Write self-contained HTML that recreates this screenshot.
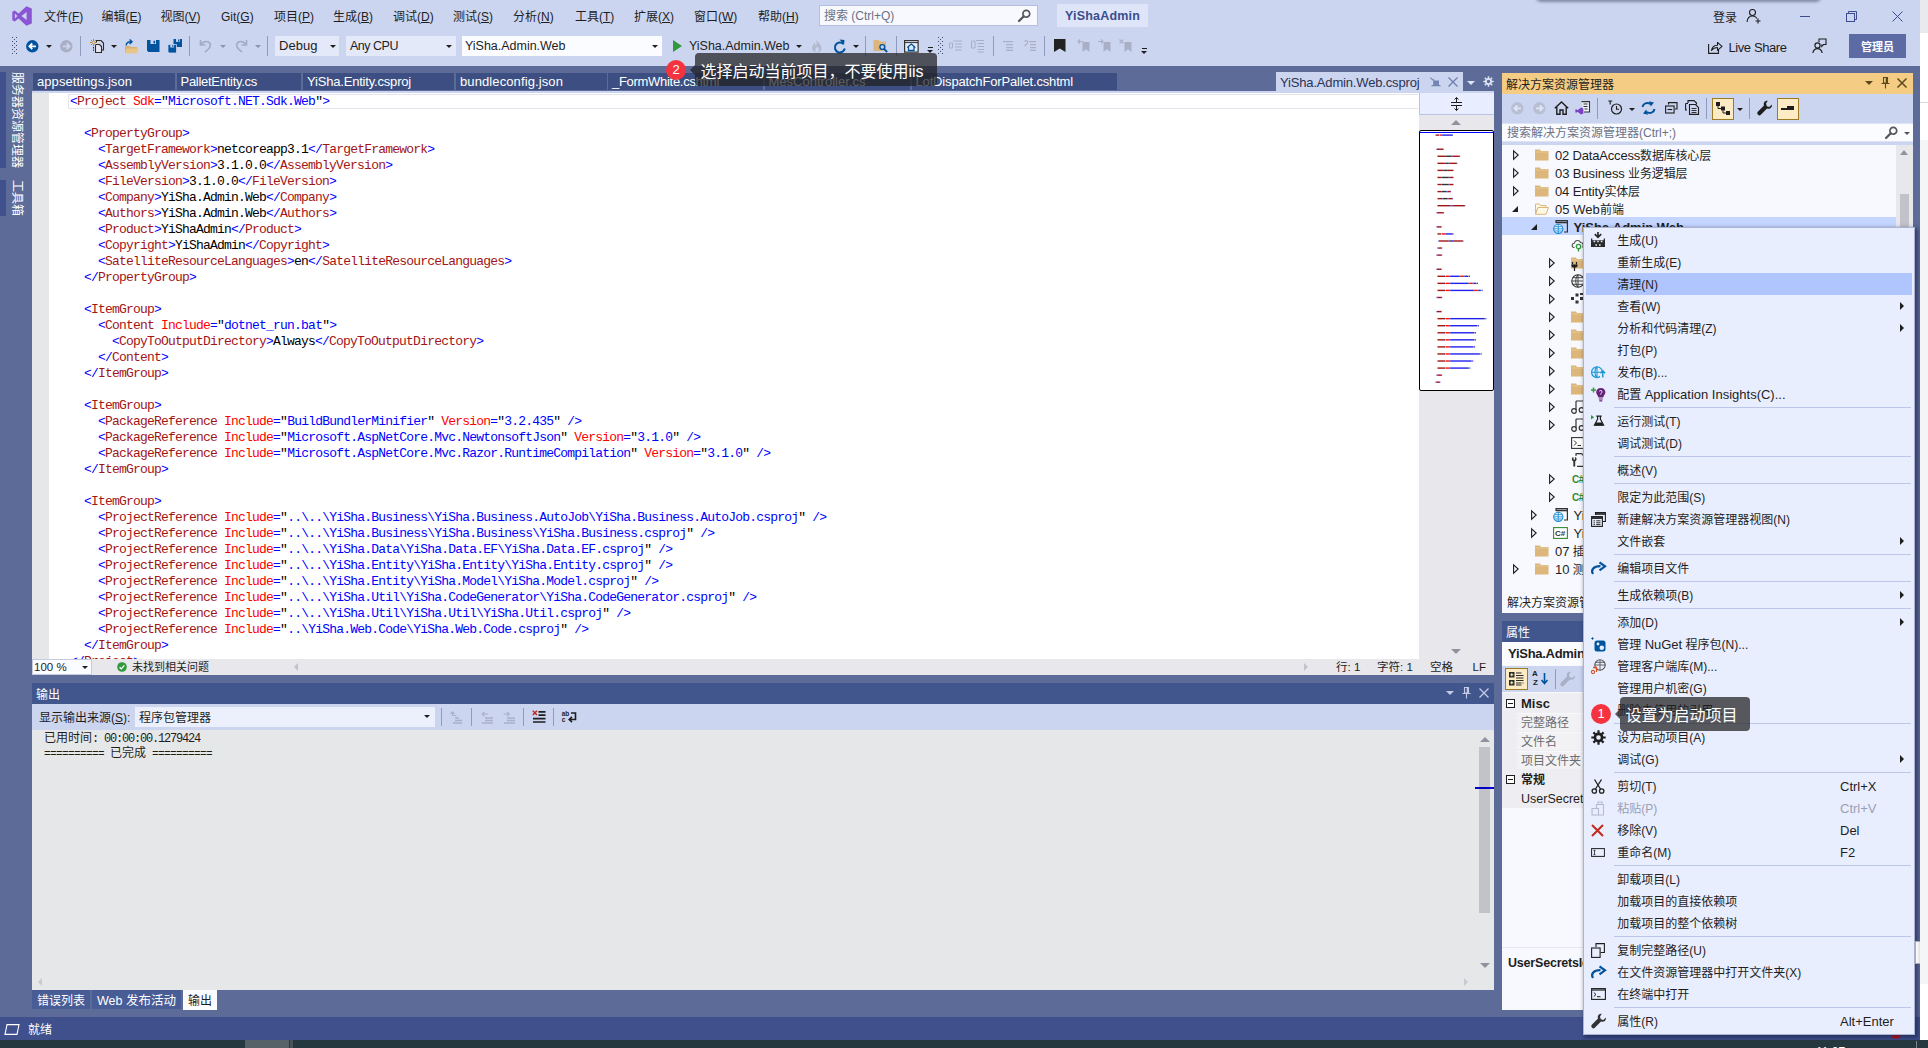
<!DOCTYPE html>
<html lang="zh-CN"><head><meta charset="utf-8"><title>YiShaAdmin - Microsoft Visual Studio</title>
<style>
*{box-sizing:border-box;margin:0;padding:0}
html,body{width:1928px;height:1048px;overflow:hidden;background:#fff}
body{position:relative;font-family:"Liberation Sans","Noto Sans CJK SC",sans-serif;font-size:12px;color:#1e1e1e;line-height:1}
.a{position:absolute}
.t{position:absolute;white-space:nowrap;line-height:16px;height:16px;margin-top:1px}
.l{font-size:13px}
#vs{position:absolute;left:0;top:0;width:1920px;height:1040px;background:#5d6b99;overflow:hidden}
#cmd{position:absolute;left:0;top:0;width:1920px;height:66px;background:#ccd5f0}
.mi{position:absolute;top:8.5px;line-height:16px;white-space:nowrap;font-size:12px}
.mi u{text-decoration:underline;text-underline-offset:1px}
.sep{position:absolute;width:1px;background:#8e9bbc}
.combo{position:absolute;top:36px;height:20px;background:#e4e9f9;line-height:20px;padding-left:4px;white-space:nowrap;font-size:12px}
.dd{position:absolute;width:0;height:0;border-left:3px solid transparent;border-right:3px solid transparent;border-top:3px solid #1e1e1e}
.tab{position:absolute;top:73px;height:17px;background:#3d4f82;color:#fff;line-height:17px;padding-left:4px;white-space:nowrap;font-size:12px;overflow:hidden}
.code{position:absolute;left:70px;white-space:pre;font-family:"Liberation Mono","Noto Sans CJK SC",monospace;font-size:13px;letter-spacing:-0.8px;line-height:16px;height:16px;color:#000}
.b{color:#00f}.r{color:#a31515}.at{color:#f00}
.row{position:absolute;left:1502px;width:394px;height:18px}
.row .tx{position:absolute;top:1px;line-height:16px;white-space:nowrap}
.exp{position:absolute;width:0;height:0}
.m{position:absolute;left:1617.3px;line-height:16px;height:16px;margin-top:1px;white-space:nowrap;font-size:12px;color:#1e1e1e}
.sc{position:absolute;left:1840px;line-height:16px;height:16px;margin-top:1px;white-space:nowrap;font-size:12px;color:#1e1e1e}
.msep{position:absolute;left:1614px;width:297px;height:1px;background:#bcc7e8}
.marr{position:absolute;left:1900px;width:0;height:0;border-top:4px solid transparent;border-bottom:4px solid transparent;border-left:4px solid #1e1e1e}
.tip{position:absolute;background:rgba(30,30,32,.72);border-radius:4px;color:#fff;font-size:16px;white-space:nowrap}
.badge{position:absolute;width:20px;height:20px;border-radius:10px;background:#f5333f;color:#fff;font-size:13px;line-height:20px;text-align:center}
svg{position:absolute;overflow:visible}
</style></head>
<body>
<div class="a" style="left:1920px;top:0;width:8px;height:33px;background:#e8eaed"></div>
<div class="a" style="left:1920px;top:102px;width:8px;height:1px;background:#d8d8d8"></div>
<div class="a" style="left:1920px;top:140px;width:8px;height:844px;background:#f4f5f7"></div>
<div class="a" style="left:0;top:1040px;width:1928px;height:8px;background:#25373f"></div>
<div class="a" style="left:245px;top:1040px;width:44px;height:8px;background:#566268"></div><div class="a" style="left:290px;top:1040px;width:3px;height:8px;background:#48545a"></div>
<div class="a" style="left:1915.5px;top:1041px;width:1px;height:7px;background:#7a868c"></div>
<div class="a" style="left:1816px;top:1045.5px;width:30px;height:3px;overflow:hidden;color:#fff;font-size:12px;line-height:12px;white-space:nowrap">11:07</div>
<div id="vs">
<div id="cmd">
<svg style="left:12px;top:6px" width="20" height="20" viewBox="0 0 20 20"><path d="M14.4 0.2 L19.8 2.4 V17.6 L14.4 19.8 L6.6 12.4 L2.7 15.4 L0.3 14.2 V5.8 L2.7 4.6 L6.6 7.6 Z M14.6 5.9 L9.5 10 L14.6 14.1 Z M2.9 7.5 V12.5 L5.4 10 Z" fill="#8a56d3" fill-rule="evenodd"/></svg>
<div class="mi" style="left:44px">文件(<u>F</u>)</div>
<div class="mi" style="left:101.5px">编辑(<u>E</u>)</div>
<div class="mi" style="left:160.5px">视图(<u>V</u>)</div>
<div class="mi" style="left:221px">Git(<u>G</u>)</div>
<div class="mi" style="left:274px">项目(<u>P</u>)</div>
<div class="mi" style="left:333px">生成(<u>B</u>)</div>
<div class="mi" style="left:393px">调试(<u>D</u>)</div>
<div class="mi" style="left:453px">测试(<u>S</u>)</div>
<div class="mi" style="left:513px">分析(<u>N</u>)</div>
<div class="mi" style="left:575px">工具(<u>T</u>)</div>
<div class="mi" style="left:634px">扩展(<u>X</u>)</div>
<div class="mi" style="left:694px">窗口(<u>W</u>)</div>
<div class="mi" style="left:758px">帮助(<u>H</u>)</div>
<div class="a" style="left:819px;top:5px;width:219px;height:21px;background:#f7f9fe;border:1px solid #b4bfe0"></div><div class="t" style="left:824px;top:7px;color:#6b7185">搜索 (Ctrl+Q)</div>
<svg style="left:1018px;top:9px" width="13" height="13" viewBox="0 0 13 13"><circle cx="8.3" cy="4.7" r="3.4" fill="none" stroke="#555" stroke-width="1.7"/><path d="M5.8 7.2 L1 12" stroke="#555" stroke-width="2.2" stroke-linecap="round"/></svg>
<div class="a" style="left:1057px;top:4px;width:91px;height:23px;background:#dfe5f8"></div><div class="t" style="left:1065px;top:7px;color:#3b4d8e;font-size:12.5px;letter-spacing:0.183px;font-weight:bold;">YiShaAdmin</div>
<div class="t" style="left:1713px;top:9px">登录</div>
<svg style="left:1746px;top:8px" width="16" height="16" viewBox="0 0 16 16"><circle cx="6.5" cy="4.5" r="3" fill="none" stroke="#1e1e1e" stroke-width="1.1"/><path d="M1 14 C1.5 9.5 4 8 6.5 8 C8.5 8 10 8.8 11 10.5" fill="none" stroke="#1e1e1e" stroke-width="1.1"/><path d="M12 10.5 V15.5 M9.5 13 H14.5" stroke="#1e1e1e" stroke-width="1.1"/></svg>
<div class="a" style="left:1800px;top:16px;width:10px;height:1px;background:#3b4d8e"></div><svg style="left:1846px;top:11px" width="11" height="11" viewBox="0 0 11 11"><rect x="0.5" y="2.5" width="8" height="8" fill="none" stroke="#3b4d8e"/><path d="M2.5 2.5 V0.5 H10.5 V8.5 H8.5" fill="none" stroke="#3b4d8e"/></svg><svg style="left:1892px;top:11px" width="11" height="11" viewBox="0 0 11 11"><path d="M0.5 0.5 L10.5 10.5 M10.5 0.5 L0.5 10.5" stroke="#3b4d8e" stroke-width="1"/></svg>
<div class="a" style="left:1538px;top:-7px;width:281px;height:7px;background:#778;border-radius:3px;box-shadow:0 0 3px 2px rgba(70,75,100,.55)"></div>
</div>
<svg style="left:12px;top:37px" width="5" height="18" viewBox="0 0 5 18" shape-rendering="crispEdges"><rect x="0" y="0" width="1" height="1" fill="#3f4a6e"/><rect x="4" y="0" width="1" height="1" fill="#3f4a6e"/><rect x="2" y="2" width="1" height="1" fill="#3f4a6e"/><rect x="0" y="4" width="1" height="1" fill="#3f4a6e"/><rect x="4" y="4" width="1" height="1" fill="#3f4a6e"/><rect x="2" y="6" width="1" height="1" fill="#3f4a6e"/><rect x="0" y="8" width="1" height="1" fill="#3f4a6e"/><rect x="4" y="8" width="1" height="1" fill="#3f4a6e"/><rect x="2" y="10" width="1" height="1" fill="#3f4a6e"/><rect x="0" y="12" width="1" height="1" fill="#3f4a6e"/><rect x="4" y="12" width="1" height="1" fill="#3f4a6e"/><rect x="2" y="14" width="1" height="1" fill="#3f4a6e"/><rect x="0" y="16" width="1" height="1" fill="#3f4a6e"/><rect x="4" y="16" width="1" height="1" fill="#3f4a6e"/></svg><svg style="left:26px;top:39.5px" width="13" height="13" viewBox="0 0 13 13"><circle cx="6.3" cy="6.3" r="6.2" fill="#00539c"/><path d="M10 6.3 H4 M6.3 3.5 L3.4 6.3 L6.3 9.1" fill="none" stroke="#fff" stroke-width="1.8"/></svg><div class="dd" style="left:46px;top:45px;border-top-color:#1e1e1e"></div><svg style="left:59.5px;top:39.5px" width="13" height="13" viewBox="0 0 13 13"><circle cx="6.3" cy="6.3" r="6.2" fill="#a9afc4"/><path d="M3 6.3 H9 M6.7 3.5 L9.6 6.3 L6.7 9.1" fill="none" stroke="#ccd5f0" stroke-width="1.8"/></svg><div class="sep" style="left:80px;top:36px;height:20px"></div><svg style="left:90px;top:39px" width="14" height="14" viewBox="0 0 14 14"><path d="M6.5 3 V1.5 H11 L13.5 4 V11 H12" fill="none" stroke="#2b2b2b" stroke-width="1.1"/><path d="M5.5 5.5 H9.5 L11.5 7.5 V13.5 H5.5 Z" fill="#e6e6f2" stroke="#2b2b2b" stroke-width="1.1"/><path d="M3.5 8 V11.5 H4.5" fill="none" stroke="#2b2b2b" stroke-width="1" stroke-dasharray="1.5 1"/><path d="M3.5 0 V7 M0 3.5 H7 M1 1 L6 6 M6 1 L1 6" stroke="#c27d1a" stroke-width="0.9"/><circle cx="3.5" cy="3.5" r="1.2" fill="#ccd5f0"/></svg><div class="dd" style="left:111px;top:45px;border-top-color:#1e1e1e"></div><svg style="left:123.5px;top:38.5px" width="15" height="15" viewBox="0 0 15 15"><path d="M1 7 H6 L7 8 H13 V14 H1 Z" fill="#d9b172"/><path d="M2.8 9.6 H14.8 L13 14.6 H0.8 Z" fill="#e8c68a"/><path d="M2.3 6.5 C2 3.8 4 2.6 7.6 2.8 M5.6 0.6 L8 2.8 L5.6 5" fill="none" stroke="#00539c" stroke-width="1.4"/></svg><svg style="left:147px;top:40px" width="13" height="12" viewBox="0 0 13 12"><path d="M0 0 H12.5 V12 H1.5 L0 10.5 Z" fill="#00539c"/><rect x="3.5" y="0" width="5.5" height="4" fill="#ccd5f0"/><rect x="6.5" y="0.8" width="1.6" height="2.6" fill="#00539c"/></svg><svg style="left:168px;top:39px" width="15" height="14" viewBox="0 0 15 14"><path d="M5.5 0 H14 V8 H6.5 L5.5 7 Z" fill="#00539c"/><rect x="8" y="0" width="3.8" height="2.8" fill="#ccd5f0"/><rect x="10" y="0.5" width="1.1" height="1.8" fill="#00539c"/><path d="M0 5.5 H8.5 V14 H1 L0 13 Z" fill="#00539c" stroke="#ccd5f0" stroke-width="0.8"/><rect x="2.3" y="5.7" width="3.8" height="2.8" fill="#ccd5f0"/><rect x="4.3" y="6.2" width="1.1" height="1.8" fill="#00539c"/></svg><div class="sep" style="left:189px;top:36px;height:20px"></div><svg style="left:199px;top:39px" width="14" height="14" viewBox="0 0 14 14"><path d="M1.5 1 V6 H6.5 M2 5.5 C4 2 9 1.5 11 4.5 C12.5 7.5 9.5 10.5 6 13" fill="none" stroke="#a4abc2" stroke-width="1.7"/></svg><div class="dd" style="left:220px;top:45px;border-top-color:#8d94ad"></div><svg style="left:233.5px;top:39px" width="14" height="14" viewBox="0 0 14 14"><path d="M12.5 1 V6 H7.5 M12 5.5 C10 2 5 1.5 3 4.5 C1.5 7.5 4.5 10.5 8 13" fill="none" stroke="#a4abc2" stroke-width="1.7"/></svg><div class="dd" style="left:255px;top:45px;border-top-color:#8d94ad"></div><div class="sep" style="left:267px;top:36px;height:20px"></div><div class="combo" style="left:275px;width:64px;font-size:13px;letter-spacing:0.037px;">Debug</div><div class="dd" style="left:330px;top:45px;border-top-color:#1e1e1e"></div><div class="combo" style="left:346px;width:110px;font-size:12.5px;letter-spacing:-0.487px;">Any CPU</div><div class="dd" style="left:446px;top:45px;border-top-color:#1e1e1e"></div><div class="combo" style="left:462px;width:200px;background:#fbfcff;padding-left:3px;font-size:12.5px;letter-spacing:-0.017px;">YiSha.Admin.Web</div><div class="dd" style="left:652px;top:45px;border-top-color:#1e1e1e"></div><svg style="left:672.5px;top:40px" width="9" height="12" viewBox="0 0 9 12"><path d="M0 0 L9 6 L0 12 Z" fill="#2f9a3a"/></svg><div class="t" style="left:689px;top:36.5px;font-size:12.5px;letter-spacing:-0.017px;">YiSha.Admin.Web</div><div class="dd" style="left:796px;top:45px;border-top-color:#1e1e1e"></div><svg style="left:811px;top:39px" width="12" height="14" viewBox="0 0 12 14"><path d="M5 0.5 C7 3 10.5 5.5 10.5 9.5 C10.5 12 8.5 13.5 6 13.5 C3 13.5 1 11.5 1 9 C1 6.5 3 5.5 3.3 3.5 C4.5 4.5 4.8 6 4.6 7.2 C6 6 5.8 2.5 5 0.5 Z" fill="#b4bad0"/><path d="M6 13 C4.5 13 3.8 11.8 4.3 10.5 C4.8 9.5 5.8 9 6 7.5 C7.5 9 8.3 10.3 7.8 11.8 C7.5 12.6 6.8 13 6 13 Z" fill="#ccd5f0"/></svg><svg style="left:833px;top:38.5px" width="14" height="15" viewBox="0 0 14 15"><path d="M10.5 5 A5 5 0 1 0 11.8 9.5" fill="none" stroke="#00539c" stroke-width="2"/><path d="M6.5 0.5 L11.5 1 L11 6 Z" fill="#00539c"/></svg><div class="dd" style="left:853px;top:45px;border-top-color:#1e1e1e"></div><div class="sep" style="left:865px;top:36px;height:20px"></div><svg style="left:873px;top:39px" width="16" height="14" viewBox="0 0 16 14"><path d="M0.5 1 H5.5 L6.8 2.5 H13 V12 H0.5 Z" fill="#dcb67a"/><circle cx="9.3" cy="8" r="2.4" fill="#ccd5f0" stroke="#00539c" stroke-width="1.4"/><path d="M11 9.8 L14.2 13" stroke="#00539c" stroke-width="1.8"/></svg><div class="sep" style="left:896px;top:36px;height:20px"></div><svg style="left:904px;top:39.5px" width="15" height="13" viewBox="0 0 15 13"><rect x="0.6" y="0.6" width="13.5" height="11.5" fill="#e6ebfa" stroke="#333" stroke-width="1.2"/><path d="M1 2.6 H14" stroke="#333" stroke-width="1"/><path d="M3.3 7.5 L7.3 4 L11.3 7.5 M4.5 7 V10.5 H10 V7" fill="none" stroke="#00539c" stroke-width="1.3"/></svg><div class="a" style="left:927.5px;top:47px;width:5px;height:1px;background:#1e1e1e"></div><div class="dd" style="left:927px;top:50px;border-top-color:#1e1e1e"></div><svg style="left:938px;top:37px" width="5" height="18" viewBox="0 0 5 18" shape-rendering="crispEdges"><rect x="0" y="0" width="1" height="1" fill="#3f4a6e"/><rect x="4" y="0" width="1" height="1" fill="#3f4a6e"/><rect x="2" y="2" width="1" height="1" fill="#3f4a6e"/><rect x="0" y="4" width="1" height="1" fill="#3f4a6e"/><rect x="4" y="4" width="1" height="1" fill="#3f4a6e"/><rect x="2" y="6" width="1" height="1" fill="#3f4a6e"/><rect x="0" y="8" width="1" height="1" fill="#3f4a6e"/><rect x="4" y="8" width="1" height="1" fill="#3f4a6e"/><rect x="2" y="10" width="1" height="1" fill="#3f4a6e"/><rect x="0" y="12" width="1" height="1" fill="#3f4a6e"/><rect x="4" y="12" width="1" height="1" fill="#3f4a6e"/><rect x="2" y="14" width="1" height="1" fill="#3f4a6e"/><rect x="0" y="16" width="1" height="1" fill="#3f4a6e"/><rect x="4" y="16" width="1" height="1" fill="#3f4a6e"/></svg><svg style="left:949px;top:40px" width="14" height="12" viewBox="0 0 14 12"><path d="M4 1 H13 M6 4 H13 M6 7 H13 M6 10 H13" stroke="#a9b0c6" stroke-width="1.2"/><path d="M0.5 3 H3.5 V8 H0.5 Z" fill="none" stroke="#a9b0c6"/></svg><svg style="left:971px;top:39px" width="14" height="14" viewBox="0 0 14 14"><path d="M0.5 2 H4 V9 H0.5 Z" fill="none" stroke="#a9b0c6"/><path d="M5 1.5 H13 M6.5 4.5 H13 M6.5 7.5 H13 M6.5 10.5 H13 M6.5 13 H13" stroke="#a9b0c6" stroke-width="1.2"/></svg><div class="sep" style="left:993px;top:36px;height:20px"></div><svg style="left:1003px;top:41px" width="11" height="10" viewBox="0 0 11 10"><path d="M0 0.6 H10 M3 3.6 H10 M3 6.6 H10 M3 9.4 H10" stroke="#a9b0c6" stroke-width="1.1"/></svg><svg style="left:1024px;top:40px" width="13" height="11" viewBox="0 0 13 11"><path d="M5 1.6 H12 M6 4.6 H12 M6 7.6 H12 M6 10.4 H12" stroke="#a9b0c6" stroke-width="1.1"/><path d="M0.5 1.5 C1.5 0 4 0.5 3.6 2.5 C3.3 3.8 1.5 4.5 0.8 6" fill="none" stroke="#a9b0c6" stroke-width="1.1"/></svg><div class="sep" style="left:1044px;top:36px;height:20px"></div><svg style="left:1053.5px;top:39px" width="12" height="13" viewBox="0 0 12 13"><path d="M0 0 H11.5 V13 L5.75 9.5 L0 13 Z" fill="#222"/></svg><svg style="left:1077px;top:39px" width="13" height="13" viewBox="0 0 13 13"><path d="M5.5 3 H12.5 V13 L9 10.3 L5.5 13 Z" fill="#a9b0c6"/><path d="M6 2.5 H1 M3 0.5 L1 2.5 L3 4.5" fill="none" stroke="#a9b0c6" stroke-width="1.1"/></svg><svg style="left:1098px;top:39px" width="13" height="13" viewBox="0 0 13 13"><path d="M5.5 3 H12.5 V13 L9 10.3 L5.5 13 Z" fill="#a9b0c6"/><path d="M0 2.5 H5 M3 0.5 L5 2.5 L3 4.5" fill="none" stroke="#a9b0c6" stroke-width="1.1"/></svg><svg style="left:1119px;top:39px" width="13" height="13" viewBox="0 0 13 13"><path d="M5.5 3 H12.5 V13 L9 10.3 L5.5 13 Z" fill="#a9b0c6"/><path d="M0.5 0.5 L4.5 4.5 M4.5 0.5 L0.5 4.5" fill="none" stroke="#a9b0c6" stroke-width="1.1"/></svg><div class="a" style="left:1141.5px;top:48px;width:5px;height:1px;background:#1e1e1e"></div><div class="dd" style="left:1141px;top:51px;border-top-color:#1e1e1e"></div><svg style="left:1708px;top:40px" width="15" height="14" viewBox="0 0 15 14"><path d="M0.6 4 V13.4 H10.5 V10" fill="none" stroke="#1e1e1e" stroke-width="1.1"/><path d="M3.5 10.5 C4 7 6.5 5.3 9.5 5.3 V2.3 L14 6.3 L9.5 10.3 V7.5 C7 7.5 5 8.3 3.5 10.5 Z" fill="none" stroke="#1e1e1e" stroke-width="1.1" stroke-linejoin="round"/></svg><div class="t" style="left:1728.5px;top:38.5px;font-size:13px;letter-spacing:-0.416px;">Live Share</div><svg style="left:1812px;top:38px" width="15" height="16" viewBox="0 0 15 16"><circle cx="5.5" cy="7.5" r="2.6" fill="none" stroke="#1e1e1e" stroke-width="1.2"/><path d="M0.8 15 C1.5 11.5 3.5 10.6 5.5 10.6 C7.5 10.6 9.5 11.5 10.2 15" fill="none" stroke="#1e1e1e" stroke-width="1.2"/><path d="M7 4 V1 H14 V6.5 H11.5 L9.8 8.3 V6.5" fill="none" stroke="#1e1e1e" stroke-width="1.1"/></svg><div class="a" style="left:1849px;top:34px;width:57px;height:24px;background:#5c6ba4"></div><div class="t" style="left:1861px;top:38px;color:#fff;font-weight:bold;font-size:11px">管理员</div>
<div class="a" style="left:0;top:72px;width:6px;height:96px;background:#40508d"></div><div class="a" style="left:0;top:180px;width:6px;height:36px;background:#40508d"></div><div class="a" style="left:9px;top:72px;width:16px;height:96px;writing-mode:vertical-rl;text-orientation:sideways;color:#fff;font-size:12px;line-height:16px;white-space:nowrap">服务器资源管理器</div><div class="a" style="left:9px;top:180px;width:16px;height:36px;writing-mode:vertical-rl;text-orientation:sideways;color:#fff;font-size:12px;line-height:16px;white-space:nowrap">工具箱</div>
<div class="tab" style="left:33px;width:141.5px;font-size:13px;letter-spacing:0.065px;">appsettings.json</div><div class="tab" style="left:176.5px;width:124px;font-size:13px;letter-spacing:-0.279px;">PalletEntity.cs</div><div class="tab" style="left:303px;width:150.5px;font-size:13px;letter-spacing:-0.192px;">YiSha.Entity.csproj</div><div class="tab" style="left:456px;width:150.5px;font-size:13px;letter-spacing:0.106px;">bundleconfig.json</div><div class="tab" style="left:608px;width:154.5px;font-size:13px;letter-spacing:-0.292px;">_FormWhite.cshtml</div><div class="tab" style="left:764.5px;width:145px;font-size:13px;letter-spacing:0.012px;">MesController.cs</div><div class="tab" style="left:911.5px;width:205.5px;font-size:13px;letter-spacing:-0.161px;">LotDispatchForPallet.cshtml</div><div class="a" style="left:1276px;top:72px;width:187px;height:20.5px;background:#ccd5f0"></div><div class="t" style="left:1280px;top:74px;color:#2a3354;font-size:13px;letter-spacing:-0.163px;">YiSha.Admin.Web.csproj</div><svg style="left:1430px;top:77px" width="11" height="10" viewBox="0 0 11 10"><path d="M0.3 0.6 L3.2 3.3" stroke="#7484b3" stroke-width="1.1"/><path d="M3.5 1 L4.6 3.6 H9 V8 H10.5 V9.2 H1.5 V8 H3.2 V4.8 Z" fill="#7484b3"/></svg><svg style="left:1448px;top:76.5px" width="10" height="10" viewBox="0 0 10 10"><path d="M0.5 0.5 L9.5 9.5 M9.5 0.5 L0.5 9.5" stroke="#6b7cab" stroke-width="1.2"/></svg><div class="dd" style="left:1466.5px;top:81px;border-left-width:4px;border-right-width:4px;border-top:4px solid #dfe5f8"></div><svg style="left:1482.5px;top:75.5px" width="11" height="11" viewBox="0 0 11 11"><circle cx="5.5" cy="5.5" r="2.6" fill="none" stroke="#dfe5f8" stroke-width="1.8"/><path d="M5.5 0.3 V2 M5.5 9 V10.7 M0.3 5.5 H2 M9 5.5 H10.7 M1.8 1.8 L3 3 M8 8 L9.2 9.2 M9.2 1.8 L8 3 M3 8 L1.8 9.2" stroke="#dfe5f8" stroke-width="1.5"/></svg>
<div class="a" style="left:32px;top:90.5px;width:1462px;height:3px;background:#ccd5f0"></div><div class="a" id="ed" style="left:32px;top:93px;width:1387px;height:566px;background:#fff;overflow:hidden"></div><div class="a" style="left:32px;top:93px;width:17px;height:566px;background:#e6e7e8"></div><div class="a" style="left:68px;top:93.5px;width:1350px;height:15.5px;border:1px solid #e4e4ec;border-right:0"></div>
<div class="code" style="top:94px"><span class="b">&lt;</span><span class="r">Project</span> <span class="at">Sdk</span><span class="b">=</span>"<span class="b">Microsoft.NET.Sdk.Web</span>"<span class="b">&gt;</span></div>
<div class="code" style="top:126px">  <span class="b">&lt;</span><span class="r">PropertyGroup</span><span class="b">&gt;</span></div>
<div class="code" style="top:142px">    <span class="b">&lt;</span><span class="r">TargetFramework</span><span class="b">&gt;</span>netcoreapp3.1<span class="b">&lt;/</span><span class="r">TargetFramework</span><span class="b">&gt;</span></div>
<div class="code" style="top:158px">    <span class="b">&lt;</span><span class="r">AssemblyVersion</span><span class="b">&gt;</span>3.1.0.0<span class="b">&lt;/</span><span class="r">AssemblyVersion</span><span class="b">&gt;</span></div>
<div class="code" style="top:174px">    <span class="b">&lt;</span><span class="r">FileVersion</span><span class="b">&gt;</span>3.1.0.0<span class="b">&lt;/</span><span class="r">FileVersion</span><span class="b">&gt;</span></div>
<div class="code" style="top:190px">    <span class="b">&lt;</span><span class="r">Company</span><span class="b">&gt;</span>YiSha.Admin.Web<span class="b">&lt;/</span><span class="r">Company</span><span class="b">&gt;</span></div>
<div class="code" style="top:206px">    <span class="b">&lt;</span><span class="r">Authors</span><span class="b">&gt;</span>YiSha.Admin.Web<span class="b">&lt;/</span><span class="r">Authors</span><span class="b">&gt;</span></div>
<div class="code" style="top:222px">    <span class="b">&lt;</span><span class="r">Product</span><span class="b">&gt;</span>YiShaAdmin<span class="b">&lt;/</span><span class="r">Product</span><span class="b">&gt;</span></div>
<div class="code" style="top:238px">    <span class="b">&lt;</span><span class="r">Copyright</span><span class="b">&gt;</span>YiShaAdmin<span class="b">&lt;/</span><span class="r">Copyright</span><span class="b">&gt;</span></div>
<div class="code" style="top:254px">    <span class="b">&lt;</span><span class="r">SatelliteResourceLanguages</span><span class="b">&gt;</span>en<span class="b">&lt;/</span><span class="r">SatelliteResourceLanguages</span><span class="b">&gt;</span></div>
<div class="code" style="top:270px">  <span class="b">&lt;/</span><span class="r">PropertyGroup</span><span class="b">&gt;</span></div>
<div class="code" style="top:302px">  <span class="b">&lt;</span><span class="r">ItemGroup</span><span class="b">&gt;</span></div>
<div class="code" style="top:318px">    <span class="b">&lt;</span><span class="r">Content</span> <span class="at">Include</span><span class="b">=</span>"<span class="b">dotnet_run.bat</span>"<span class="b">&gt;</span></div>
<div class="code" style="top:334px">      <span class="b">&lt;</span><span class="r">CopyToOutputDirectory</span><span class="b">&gt;</span>Always<span class="b">&lt;/</span><span class="r">CopyToOutputDirectory</span><span class="b">&gt;</span></div>
<div class="code" style="top:350px">    <span class="b">&lt;/</span><span class="r">Content</span><span class="b">&gt;</span></div>
<div class="code" style="top:366px">  <span class="b">&lt;/</span><span class="r">ItemGroup</span><span class="b">&gt;</span></div>
<div class="code" style="top:398px">  <span class="b">&lt;</span><span class="r">ItemGroup</span><span class="b">&gt;</span></div>
<div class="code" style="top:414px">    <span class="b">&lt;</span><span class="r">PackageReference</span> <span class="at">Include</span><span class="b">=</span>"<span class="b">BuildBundlerMinifier</span>" <span class="at">Version</span><span class="b">=</span>"<span class="b">3.2.435</span>"<span class="b"> /&gt;</span></div>
<div class="code" style="top:430px">    <span class="b">&lt;</span><span class="r">PackageReference</span> <span class="at">Include</span><span class="b">=</span>"<span class="b">Microsoft.AspNetCore.Mvc.NewtonsoftJson</span>" <span class="at">Version</span><span class="b">=</span>"<span class="b">3.1.0</span>"<span class="b"> /&gt;</span></div>
<div class="code" style="top:446px">    <span class="b">&lt;</span><span class="r">PackageReference</span> <span class="at">Include</span><span class="b">=</span>"<span class="b">Microsoft.AspNetCore.Mvc.Razor.RuntimeCompilation</span>" <span class="at">Version</span><span class="b">=</span>"<span class="b">3.1.0</span>"<span class="b"> /&gt;</span></div>
<div class="code" style="top:462px">  <span class="b">&lt;/</span><span class="r">ItemGroup</span><span class="b">&gt;</span></div>
<div class="code" style="top:494px">  <span class="b">&lt;</span><span class="r">ItemGroup</span><span class="b">&gt;</span></div>
<div class="code" style="top:510px">    <span class="b">&lt;</span><span class="r">ProjectReference</span> <span class="at">Include</span><span class="b">=</span>"<span class="b">..\..\YiSha.Business\YiSha.Business.AutoJob\YiSha.Business.AutoJob.csproj</span>"<span class="b"> /&gt;</span></div>
<div class="code" style="top:526px">    <span class="b">&lt;</span><span class="r">ProjectReference</span> <span class="at">Include</span><span class="b">=</span>"<span class="b">..\..\YiSha.Business\YiSha.Business\YiSha.Business.csproj</span>"<span class="b"> /&gt;</span></div>
<div class="code" style="top:542px">    <span class="b">&lt;</span><span class="r">ProjectReference</span> <span class="at">Include</span><span class="b">=</span>"<span class="b">..\..\YiSha.Data\YiSha.Data.EF\YiSha.Data.EF.csproj</span>"<span class="b"> /&gt;</span></div>
<div class="code" style="top:558px">    <span class="b">&lt;</span><span class="r">ProjectReference</span> <span class="at">Include</span><span class="b">=</span>"<span class="b">..\..\YiSha.Entity\YiSha.Entity\YiSha.Entity.csproj</span>"<span class="b"> /&gt;</span></div>
<div class="code" style="top:574px">    <span class="b">&lt;</span><span class="r">ProjectReference</span> <span class="at">Include</span><span class="b">=</span>"<span class="b">..\..\YiSha.Entity\YiSha.Model\YiSha.Model.csproj</span>"<span class="b"> /&gt;</span></div>
<div class="code" style="top:590px">    <span class="b">&lt;</span><span class="r">ProjectReference</span> <span class="at">Include</span><span class="b">=</span>"<span class="b">..\..\YiSha.Util\YiSha.CodeGenerator\YiSha.CodeGenerator.csproj</span>"<span class="b"> /&gt;</span></div>
<div class="code" style="top:606px">    <span class="b">&lt;</span><span class="r">ProjectReference</span> <span class="at">Include</span><span class="b">=</span>"<span class="b">..\..\YiSha.Util\YiSha.Util\YiSha.Util.csproj</span>"<span class="b"> /&gt;</span></div>
<div class="code" style="top:622px">    <span class="b">&lt;</span><span class="r">ProjectReference</span> <span class="at">Include</span><span class="b">=</span>"<span class="b">..\YiSha.Web.Code\YiSha.Web.Code.csproj</span>"<span class="b"> /&gt;</span></div>
<div class="code" style="top:638px">  <span class="b">&lt;/</span><span class="r">ItemGroup</span><span class="b">&gt;</span></div>
<div class="code" style="top:654px;height:5px;overflow:hidden"><span class="b">&lt;/</span><span class="r">Project</span><span class="b">&gt;</span></div>
<div class="a" style="left:1419px;top:93px;width:75px;height:566px;background:#e8e8ec"></div><div class="a" style="left:1419px;top:93px;width:75px;height:22px;background:#e8edff;border-left:1px solid #b9c3e6;border-bottom:1px solid #b9c3e6"></div><svg style="left:1450px;top:97px" width="13" height="14" viewBox="0 0 13 14"><path d="M1 5.5 H12 M1 8.5 H12 M6.5 0.5 V5.5 M6.5 8.5 V13.5 M4.5 2.5 L6.5 0.5 L8.5 2.5 M4.5 11.5 L6.5 13.5 L8.5 11.5" fill="none" stroke="#1e1e1e" stroke-width="1"/></svg><div class="a" style="left:1451px;top:120px;width:0;height:0;border-left:5px solid transparent;border-right:5px solid transparent;border-bottom:5px solid #8f939e"></div><div class="a" style="left:1451px;top:649px;width:0;height:0;border-left:5px solid transparent;border-right:5px solid transparent;border-top:5px solid #8f939e"></div><div class="a" style="left:1419px;top:129.5px;width:75px;height:261px;background:#fff;border:1px solid #000;border-radius:2px"></div><div class="a" style="left:1420px;top:131.5px;width:73px;height:1.5px;background:#00f"></div><svg style="left:1419px;top:93px" width="75" height="300" viewBox="0 0 75 300"><rect x="16.60" y="41.40" width="0.47" height="1.4" fill="#2222ee"/><rect x="17.07" y="41.40" width="3.29" height="1.4" fill="#a31515"/><rect x="20.83" y="41.40" width="1.41" height="1.4" fill="#ee1111"/><rect x="22.24" y="41.40" width="0.47" height="1.4" fill="#2222ee"/><rect x="22.71" y="41.40" width="0.47" height="1.4" fill="#333"/><rect x="23.18" y="41.40" width="9.87" height="1.4" fill="#2222ee"/><rect x="33.05" y="41.40" width="0.47" height="1.4" fill="#333"/><rect x="33.52" y="41.40" width="0.47" height="1.4" fill="#2222ee"/><rect x="17.54" y="55.52" width="0.47" height="1.4" fill="#2222ee"/><rect x="18.01" y="55.52" width="6.11" height="1.4" fill="#a31515"/><rect x="24.12" y="55.52" width="0.47" height="1.4" fill="#2222ee"/><rect x="18.48" y="62.58" width="0.47" height="1.4" fill="#2222ee"/><rect x="18.95" y="62.58" width="7.05" height="1.4" fill="#a31515"/><rect x="26.00" y="62.58" width="0.47" height="1.4" fill="#2222ee"/><rect x="26.47" y="62.58" width="6.11" height="1.4" fill="#333"/><rect x="32.58" y="62.58" width="0.94" height="1.4" fill="#2222ee"/><rect x="33.52" y="62.58" width="7.05" height="1.4" fill="#a31515"/><rect x="40.57" y="62.58" width="0.47" height="1.4" fill="#2222ee"/><rect x="18.48" y="69.64" width="0.47" height="1.4" fill="#2222ee"/><rect x="18.95" y="69.64" width="7.05" height="1.4" fill="#a31515"/><rect x="26.00" y="69.64" width="0.47" height="1.4" fill="#2222ee"/><rect x="26.47" y="69.64" width="3.29" height="1.4" fill="#333"/><rect x="29.76" y="69.64" width="0.94" height="1.4" fill="#2222ee"/><rect x="30.70" y="69.64" width="7.05" height="1.4" fill="#a31515"/><rect x="37.75" y="69.64" width="0.47" height="1.4" fill="#2222ee"/><rect x="18.48" y="76.70" width="0.47" height="1.4" fill="#2222ee"/><rect x="18.95" y="76.70" width="5.17" height="1.4" fill="#a31515"/><rect x="24.12" y="76.70" width="0.47" height="1.4" fill="#2222ee"/><rect x="24.59" y="76.70" width="3.29" height="1.4" fill="#333"/><rect x="27.88" y="76.70" width="0.94" height="1.4" fill="#2222ee"/><rect x="28.82" y="76.70" width="5.17" height="1.4" fill="#a31515"/><rect x="33.99" y="76.70" width="0.47" height="1.4" fill="#2222ee"/><rect x="18.48" y="83.76" width="0.47" height="1.4" fill="#2222ee"/><rect x="18.95" y="83.76" width="3.29" height="1.4" fill="#a31515"/><rect x="22.24" y="83.76" width="0.47" height="1.4" fill="#2222ee"/><rect x="22.71" y="83.76" width="7.05" height="1.4" fill="#333"/><rect x="29.76" y="83.76" width="0.94" height="1.4" fill="#2222ee"/><rect x="30.70" y="83.76" width="3.29" height="1.4" fill="#a31515"/><rect x="33.99" y="83.76" width="0.47" height="1.4" fill="#2222ee"/><rect x="18.48" y="90.82" width="0.47" height="1.4" fill="#2222ee"/><rect x="18.95" y="90.82" width="3.29" height="1.4" fill="#a31515"/><rect x="22.24" y="90.82" width="0.47" height="1.4" fill="#2222ee"/><rect x="22.71" y="90.82" width="7.05" height="1.4" fill="#333"/><rect x="29.76" y="90.82" width="0.94" height="1.4" fill="#2222ee"/><rect x="30.70" y="90.82" width="3.29" height="1.4" fill="#a31515"/><rect x="33.99" y="90.82" width="0.47" height="1.4" fill="#2222ee"/><rect x="18.48" y="97.88" width="0.47" height="1.4" fill="#2222ee"/><rect x="18.95" y="97.88" width="3.29" height="1.4" fill="#a31515"/><rect x="22.24" y="97.88" width="0.47" height="1.4" fill="#2222ee"/><rect x="22.71" y="97.88" width="4.70" height="1.4" fill="#333"/><rect x="27.41" y="97.88" width="0.94" height="1.4" fill="#2222ee"/><rect x="28.35" y="97.88" width="3.29" height="1.4" fill="#a31515"/><rect x="31.64" y="97.88" width="0.47" height="1.4" fill="#2222ee"/><rect x="18.48" y="104.94" width="0.47" height="1.4" fill="#2222ee"/><rect x="18.95" y="104.94" width="4.23" height="1.4" fill="#a31515"/><rect x="23.18" y="104.94" width="0.47" height="1.4" fill="#2222ee"/><rect x="23.65" y="104.94" width="4.70" height="1.4" fill="#333"/><rect x="28.35" y="104.94" width="0.94" height="1.4" fill="#2222ee"/><rect x="29.29" y="104.94" width="4.23" height="1.4" fill="#a31515"/><rect x="33.52" y="104.94" width="0.47" height="1.4" fill="#2222ee"/><rect x="18.48" y="112.00" width="0.47" height="1.4" fill="#2222ee"/><rect x="18.95" y="112.00" width="12.22" height="1.4" fill="#a31515"/><rect x="31.17" y="112.00" width="0.47" height="1.4" fill="#2222ee"/><rect x="31.64" y="112.00" width="0.94" height="1.4" fill="#333"/><rect x="32.58" y="112.00" width="0.94" height="1.4" fill="#2222ee"/><rect x="33.52" y="112.00" width="12.22" height="1.4" fill="#a31515"/><rect x="45.74" y="112.00" width="0.47" height="1.4" fill="#2222ee"/><rect x="17.54" y="119.06" width="0.94" height="1.4" fill="#2222ee"/><rect x="18.48" y="119.06" width="6.11" height="1.4" fill="#a31515"/><rect x="24.59" y="119.06" width="0.47" height="1.4" fill="#2222ee"/><rect x="17.54" y="133.18" width="0.47" height="1.4" fill="#2222ee"/><rect x="18.01" y="133.18" width="4.23" height="1.4" fill="#a31515"/><rect x="22.24" y="133.18" width="0.47" height="1.4" fill="#2222ee"/><rect x="18.48" y="140.24" width="0.47" height="1.4" fill="#2222ee"/><rect x="18.95" y="140.24" width="3.29" height="1.4" fill="#a31515"/><rect x="22.71" y="140.24" width="3.29" height="1.4" fill="#ee1111"/><rect x="26.00" y="140.24" width="0.47" height="1.4" fill="#2222ee"/><rect x="26.47" y="140.24" width="0.47" height="1.4" fill="#333"/><rect x="26.94" y="140.24" width="6.58" height="1.4" fill="#2222ee"/><rect x="33.52" y="140.24" width="0.47" height="1.4" fill="#333"/><rect x="33.99" y="140.24" width="0.47" height="1.4" fill="#2222ee"/><rect x="19.42" y="147.30" width="0.47" height="1.4" fill="#2222ee"/><rect x="19.89" y="147.30" width="9.87" height="1.4" fill="#a31515"/><rect x="29.76" y="147.30" width="0.47" height="1.4" fill="#2222ee"/><rect x="30.23" y="147.30" width="2.82" height="1.4" fill="#333"/><rect x="33.05" y="147.30" width="0.94" height="1.4" fill="#2222ee"/><rect x="33.99" y="147.30" width="9.87" height="1.4" fill="#a31515"/><rect x="43.86" y="147.30" width="0.47" height="1.4" fill="#2222ee"/><rect x="18.48" y="154.36" width="0.94" height="1.4" fill="#2222ee"/><rect x="19.42" y="154.36" width="3.29" height="1.4" fill="#a31515"/><rect x="22.71" y="154.36" width="0.47" height="1.4" fill="#2222ee"/><rect x="17.54" y="161.42" width="0.94" height="1.4" fill="#2222ee"/><rect x="18.48" y="161.42" width="4.23" height="1.4" fill="#a31515"/><rect x="22.71" y="161.42" width="0.47" height="1.4" fill="#2222ee"/><rect x="17.54" y="175.54" width="0.47" height="1.4" fill="#2222ee"/><rect x="18.01" y="175.54" width="4.23" height="1.4" fill="#a31515"/><rect x="22.24" y="175.54" width="0.47" height="1.4" fill="#2222ee"/><rect x="18.48" y="182.60" width="0.47" height="1.4" fill="#2222ee"/><rect x="18.95" y="182.60" width="7.52" height="1.4" fill="#a31515"/><rect x="26.94" y="182.60" width="3.29" height="1.4" fill="#ee1111"/><rect x="30.23" y="182.60" width="0.47" height="1.4" fill="#2222ee"/><rect x="30.70" y="182.60" width="0.47" height="1.4" fill="#333"/><rect x="31.17" y="182.60" width="9.40" height="1.4" fill="#2222ee"/><rect x="40.57" y="182.60" width="0.94" height="1.4" fill="#333"/><rect x="41.51" y="182.60" width="3.29" height="1.4" fill="#ee1111"/><rect x="44.80" y="182.60" width="0.47" height="1.4" fill="#2222ee"/><rect x="45.27" y="182.60" width="0.47" height="1.4" fill="#333"/><rect x="45.74" y="182.60" width="3.29" height="1.4" fill="#2222ee"/><rect x="49.03" y="182.60" width="0.47" height="1.4" fill="#333"/><rect x="49.97" y="182.60" width="0.94" height="1.4" fill="#2222ee"/><rect x="18.48" y="189.66" width="0.47" height="1.4" fill="#2222ee"/><rect x="18.95" y="189.66" width="7.52" height="1.4" fill="#a31515"/><rect x="26.94" y="189.66" width="3.29" height="1.4" fill="#ee1111"/><rect x="30.23" y="189.66" width="0.47" height="1.4" fill="#2222ee"/><rect x="30.70" y="189.66" width="0.47" height="1.4" fill="#333"/><rect x="31.17" y="189.66" width="18.33" height="1.4" fill="#2222ee"/><rect x="49.50" y="189.66" width="0.94" height="1.4" fill="#333"/><rect x="50.44" y="189.66" width="3.29" height="1.4" fill="#ee1111"/><rect x="53.73" y="189.66" width="0.47" height="1.4" fill="#2222ee"/><rect x="54.20" y="189.66" width="0.47" height="1.4" fill="#333"/><rect x="54.67" y="189.66" width="2.35" height="1.4" fill="#2222ee"/><rect x="57.02" y="189.66" width="0.47" height="1.4" fill="#333"/><rect x="57.96" y="189.66" width="0.94" height="1.4" fill="#2222ee"/><rect x="18.48" y="196.72" width="0.47" height="1.4" fill="#2222ee"/><rect x="18.95" y="196.72" width="7.52" height="1.4" fill="#a31515"/><rect x="26.94" y="196.72" width="3.29" height="1.4" fill="#ee1111"/><rect x="30.23" y="196.72" width="0.47" height="1.4" fill="#2222ee"/><rect x="30.70" y="196.72" width="0.47" height="1.4" fill="#333"/><rect x="31.17" y="196.72" width="23.03" height="1.4" fill="#2222ee"/><rect x="54.20" y="196.72" width="0.94" height="1.4" fill="#333"/><rect x="55.14" y="196.72" width="3.29" height="1.4" fill="#ee1111"/><rect x="58.43" y="196.72" width="0.47" height="1.4" fill="#2222ee"/><rect x="58.90" y="196.72" width="0.47" height="1.4" fill="#333"/><rect x="59.37" y="196.72" width="2.35" height="1.4" fill="#2222ee"/><rect x="61.72" y="196.72" width="0.47" height="1.4" fill="#333"/><rect x="62.66" y="196.72" width="0.94" height="1.4" fill="#2222ee"/><rect x="17.54" y="203.78" width="0.94" height="1.4" fill="#2222ee"/><rect x="18.48" y="203.78" width="4.23" height="1.4" fill="#a31515"/><rect x="22.71" y="203.78" width="0.47" height="1.4" fill="#2222ee"/><rect x="17.54" y="217.90" width="0.47" height="1.4" fill="#2222ee"/><rect x="18.01" y="217.90" width="4.23" height="1.4" fill="#a31515"/><rect x="22.24" y="217.90" width="0.47" height="1.4" fill="#2222ee"/><rect x="18.48" y="224.96" width="0.47" height="1.4" fill="#2222ee"/><rect x="18.95" y="224.96" width="7.52" height="1.4" fill="#a31515"/><rect x="26.94" y="224.96" width="3.29" height="1.4" fill="#ee1111"/><rect x="30.23" y="224.96" width="0.47" height="1.4" fill="#2222ee"/><rect x="30.70" y="224.96" width="0.47" height="1.4" fill="#333"/><rect x="31.17" y="224.96" width="34.31" height="1.4" fill="#2222ee"/><rect x="65.48" y="224.96" width="0.47" height="1.4" fill="#333"/><rect x="66.42" y="224.96" width="0.94" height="1.4" fill="#2222ee"/><rect x="18.48" y="232.02" width="0.47" height="1.4" fill="#2222ee"/><rect x="18.95" y="232.02" width="7.52" height="1.4" fill="#a31515"/><rect x="26.94" y="232.02" width="3.29" height="1.4" fill="#ee1111"/><rect x="30.23" y="232.02" width="0.47" height="1.4" fill="#2222ee"/><rect x="30.70" y="232.02" width="0.47" height="1.4" fill="#333"/><rect x="31.17" y="232.02" width="26.79" height="1.4" fill="#2222ee"/><rect x="57.96" y="232.02" width="0.47" height="1.4" fill="#333"/><rect x="58.90" y="232.02" width="0.94" height="1.4" fill="#2222ee"/><rect x="18.48" y="239.08" width="0.47" height="1.4" fill="#2222ee"/><rect x="18.95" y="239.08" width="7.52" height="1.4" fill="#a31515"/><rect x="26.94" y="239.08" width="3.29" height="1.4" fill="#ee1111"/><rect x="30.23" y="239.08" width="0.47" height="1.4" fill="#2222ee"/><rect x="30.70" y="239.08" width="0.47" height="1.4" fill="#333"/><rect x="31.17" y="239.08" width="23.97" height="1.4" fill="#2222ee"/><rect x="55.14" y="239.08" width="0.47" height="1.4" fill="#333"/><rect x="56.08" y="239.08" width="0.94" height="1.4" fill="#2222ee"/><rect x="18.48" y="246.14" width="0.47" height="1.4" fill="#2222ee"/><rect x="18.95" y="246.14" width="7.52" height="1.4" fill="#a31515"/><rect x="26.94" y="246.14" width="3.29" height="1.4" fill="#ee1111"/><rect x="30.23" y="246.14" width="0.47" height="1.4" fill="#2222ee"/><rect x="30.70" y="246.14" width="0.47" height="1.4" fill="#333"/><rect x="31.17" y="246.14" width="23.97" height="1.4" fill="#2222ee"/><rect x="55.14" y="246.14" width="0.47" height="1.4" fill="#333"/><rect x="56.08" y="246.14" width="0.94" height="1.4" fill="#2222ee"/><rect x="18.48" y="253.20" width="0.47" height="1.4" fill="#2222ee"/><rect x="18.95" y="253.20" width="7.52" height="1.4" fill="#a31515"/><rect x="26.94" y="253.20" width="3.29" height="1.4" fill="#ee1111"/><rect x="30.23" y="253.20" width="0.47" height="1.4" fill="#2222ee"/><rect x="30.70" y="253.20" width="0.47" height="1.4" fill="#333"/><rect x="31.17" y="253.20" width="23.03" height="1.4" fill="#2222ee"/><rect x="54.20" y="253.20" width="0.47" height="1.4" fill="#333"/><rect x="55.14" y="253.20" width="0.94" height="1.4" fill="#2222ee"/><rect x="18.48" y="260.26" width="0.47" height="1.4" fill="#2222ee"/><rect x="18.95" y="260.26" width="7.52" height="1.4" fill="#a31515"/><rect x="26.94" y="260.26" width="3.29" height="1.4" fill="#ee1111"/><rect x="30.23" y="260.26" width="0.47" height="1.4" fill="#2222ee"/><rect x="30.70" y="260.26" width="0.47" height="1.4" fill="#333"/><rect x="31.17" y="260.26" width="29.61" height="1.4" fill="#2222ee"/><rect x="60.78" y="260.26" width="0.47" height="1.4" fill="#333"/><rect x="61.72" y="260.26" width="0.94" height="1.4" fill="#2222ee"/><rect x="18.48" y="267.32" width="0.47" height="1.4" fill="#2222ee"/><rect x="18.95" y="267.32" width="7.52" height="1.4" fill="#a31515"/><rect x="26.94" y="267.32" width="3.29" height="1.4" fill="#ee1111"/><rect x="30.23" y="267.32" width="0.47" height="1.4" fill="#2222ee"/><rect x="30.70" y="267.32" width="0.47" height="1.4" fill="#333"/><rect x="31.17" y="267.32" width="21.15" height="1.4" fill="#2222ee"/><rect x="52.32" y="267.32" width="0.47" height="1.4" fill="#333"/><rect x="53.26" y="267.32" width="0.94" height="1.4" fill="#2222ee"/><rect x="18.48" y="274.38" width="0.47" height="1.4" fill="#2222ee"/><rect x="18.95" y="274.38" width="7.52" height="1.4" fill="#a31515"/><rect x="26.94" y="274.38" width="3.29" height="1.4" fill="#ee1111"/><rect x="30.23" y="274.38" width="0.47" height="1.4" fill="#2222ee"/><rect x="30.70" y="274.38" width="0.47" height="1.4" fill="#333"/><rect x="31.17" y="274.38" width="18.33" height="1.4" fill="#2222ee"/><rect x="49.50" y="274.38" width="0.47" height="1.4" fill="#333"/><rect x="50.44" y="274.38" width="0.94" height="1.4" fill="#2222ee"/><rect x="17.54" y="281.44" width="0.94" height="1.4" fill="#2222ee"/><rect x="18.48" y="281.44" width="4.23" height="1.4" fill="#a31515"/><rect x="22.71" y="281.44" width="0.47" height="1.4" fill="#2222ee"/><rect x="16.60" y="288.50" width="0.94" height="1.4" fill="#2222ee"/><rect x="17.54" y="288.50" width="3.29" height="1.4" fill="#a31515"/><rect x="20.83" y="288.50" width="0.47" height="1.4" fill="#2222ee"/></svg>
<div class="a" style="left:32px;top:659px;width:1462px;height:16px;background:#e7e7ec"></div><div class="a" style="left:32px;top:659px;width:60px;height:16px;background:#fbfcff;border:1px solid #c4cbe0"></div><div class="t" style="left:34px;top:658px;font-size:11.5px">100 %</div><div class="dd" style="left:82px;top:666px;border-top-color:#1e1e1e"></div><svg style="left:117px;top:662px" width="10" height="10" viewBox="0 0 10 10"><circle cx="5" cy="5" r="4.8" fill="#2f9a3a"/><path d="M2.6 5.2 L4.3 6.9 L7.4 3.4" fill="none" stroke="#fff" stroke-width="1.3"/></svg><div class="t" style="left:132px;top:658px;font-size:11px">未找到相关问题</div><div class="a" style="left:294px;top:663px;width:0;height:0;border-top:4px solid transparent;border-bottom:4px solid transparent;border-right:4px solid #c0c2cc"></div><div class="a" style="left:1304px;top:663px;width:0;height:0;border-top:4px solid transparent;border-bottom:4px solid transparent;border-left:4px solid #c0c2cc"></div><div class="t" style="left:1336px;top:658px;font-size:11.5px">行: 1</div><div class="t" style="left:1377px;top:658px;font-size:11.5px">字符: 1</div><div class="t" style="left:1430px;top:658px;font-size:11.5px">空格</div><div class="t" style="left:1472.5px;top:658px;font-size:11.5px">LF</div>
<div class="a" style="left:32px;top:683px;width:1462px;height:21px;background:#40568d"></div><div class="t" style="left:36px;top:686px;color:#fff">输出</div><div class="dd" style="left:1446px;top:691px;border-left-width:4px;border-right-width:4px;border-top:4px solid #c3cbe6"></div><svg style="left:1462px;top:687px" width="9" height="12" viewBox="0 0 9 12"><path d="M2.5 0.5 H6.5 V6 H2.5 Z M0.5 6.5 H8.5 M4.5 6.5 V11.5" fill="none" stroke="#c3cbe6" stroke-width="1.1"/><path d="M5.5 1 V6" stroke="#c3cbe6" stroke-width="1.6"/></svg><svg style="left:1479px;top:688px" width="10" height="10" viewBox="0 0 10 10"><path d="M0.5 0.5 L9.5 9.5 M9.5 0.5 L0.5 9.5" stroke="#c3cbe6" stroke-width="1.3"/></svg><div class="a" style="left:32px;top:704px;width:1462px;height:26px;background:#ccd5f0"></div><div class="t" style="left:39px;top:709px">显示输出来源(<u>S</u>):</div><div class="a" style="left:135px;top:707px;width:299.5px;height:19.5px;background:#ecf0fc"></div><div class="t" style="left:139px;top:709px">程序包管理器</div><div class="dd" style="left:424px;top:715px;border-top-color:#1e1e1e"></div><div class="sep" style="left:441px;top:708px;height:18px"></div><svg style="left:450px;top:711px" width="13" height="13" viewBox="0 0 13 13"><path d="M3 12 H12 M5 9.5 H12 M5 7 H9" stroke="#a9b0c6" stroke-width="1.3"/><path d="M6.5 4.5 H2.5 V1 M0.5 2.8 L2.5 0.8 L4.5 2.8" fill="none" stroke="#a9b0c6" stroke-width="1.2"/></svg><div class="sep" style="left:471px;top:708px;height:18px"></div><svg style="left:481px;top:711px" width="13" height="13" viewBox="0 0 13 13"><path d="M1 12 H12 M4 9.5 H12 M4 7 H12" stroke="#a9b0c6" stroke-width="1.3"/><path d="M7 3 H1.5 M3.5 0.8 L1.3 3 L3.5 5.2" fill="none" stroke="#a9b0c6" stroke-width="1.2"/></svg><svg style="left:503px;top:711px" width="13" height="13" viewBox="0 0 13 13"><path d="M1 12 H12 M4 9.5 H12 M4 7 H12" stroke="#a9b0c6" stroke-width="1.3"/><path d="M0.5 3 H6 M4 0.8 L6.2 3 L4 5.2" fill="none" stroke="#a9b0c6" stroke-width="1.2"/></svg><div class="sep" style="left:523px;top:708px;height:18px"></div><svg style="left:532px;top:710px" width="14" height="14" viewBox="0 0 14 14"><path d="M6.5 1.8 H13.5 M6.5 5.2 H13.5 M1 8.6 H13.5 M1 12 H13.5" stroke="#1e1e1e" stroke-width="1.7"/><path d="M0.8 0.8 L5 5 M5 0.8 L0.8 5" stroke="#c4281c" stroke-width="1.5"/></svg><div class="sep" style="left:553px;top:708px;height:18px"></div><svg style="left:562px;top:710.5px" width="15" height="13" viewBox="0 0 15 13"><path d="M9 2 H13.5 V8.5 H7.5 M10 5.8 L7.2 8.5 L10 11.2" fill="none" stroke="#1e1e1e" stroke-width="1.6"/><text x="-0.3" y="4.6" font-family="Liberation Sans,sans-serif" font-size="6.5" font-weight="bold" fill="#1e1e1e">ab</text><text x="-0.2" y="10.8" font-family="Liberation Sans,sans-serif" font-size="6.5" font-weight="bold" fill="#1e1e1e">c</text></svg><div class="a" style="left:32px;top:730px;width:1462px;height:260px;background:#e6e7e8"></div><div class="t" style="left:44px;top:729px;color:#1e1e1e"><span style="font-size:12px;letter-spacing:0">已用时间</span><span style="font-family:'Liberation Mono',monospace;font-size:12px;letter-spacing:-1.201px">: 00:00:00.1279424</span></div><div class="t" style="left:44px;top:744px;color:#1e1e1e"><span style="font-family:'Liberation Mono',monospace;font-size:11px;letter-spacing:-0.601px">========== </span><span style="font-size:12px;letter-spacing:0">已完成</span><span style="font-family:'Liberation Mono',monospace;font-size:11px;letter-spacing:-0.601px"> ==========</span></div><div class="a" style="left:1480px;top:737px;width:0;height:0;border-left:5px solid transparent;border-right:5px solid transparent;border-bottom:5px solid #8f939e"></div><div class="a" style="left:1479px;top:747px;width:11px;height:166px;background:#c2c3c9"></div><div class="a" style="left:1480px;top:963px;width:0;height:0;border-left:5px solid transparent;border-right:5px solid transparent;border-top:5px solid #8f939e"></div><div class="a" style="left:38px;top:978px;width:0;height:0;border-top:4px solid transparent;border-bottom:4px solid transparent;border-right:4px solid #c8cad2"></div><div class="a" style="left:1464px;top:978px;width:0;height:0;border-top:4px solid transparent;border-bottom:4px solid transparent;border-left:4px solid #c8cad2"></div><div class="a" style="left:32px;top:990px;width:58px;height:19px;background:#485c96"></div><div class="t" style="left:37px;top:992px;color:#fff">错误列表</div><div class="a" style="left:92px;top:990px;width:89px;height:19px;background:#485c96"></div><div class="t" style="left:97px;top:992px;color:#fff;font-size:12.5px">Web 发布活动</div><div class="a" style="left:183px;top:990px;width:34px;height:20px;background:#fbfcff"></div><div class="t" style="left:188px;top:992px;color:#1e1e1e">输出</div>
<div class="a" style="left:0;top:1017px;width:1920px;height:23px;background:#40508d"></div><svg style="left:4px;top:1024px" width="16" height="11" viewBox="0 0 16 11"><path d="M3 0.6 H15 L13 10.4 H1 Z" fill="none" stroke="#fff" stroke-width="1.1"/></svg><div class="t" style="left:28px;top:1021px;color:#fff">就绪</div>
<div class="a" style="left:1502px;top:73px;width:411px;height:21px;background:#f5cc84"></div><div class="t" style="left:1506px;top:76px;color:#1e1e1e">解决方案资源管理器</div><div class="dd" style="left:1865px;top:81px;border-left-width:4px;border-right-width:4px;border-top:4px solid #5a4a1e"></div><svg style="left:1881px;top:77px" width="9" height="12" viewBox="0 0 9 12"><path d="M2.5 0.5 H6.5 V6 H2.5 Z M0.5 6.5 H8.5 M4.5 6.5 V11.5" fill="none" stroke="#5a4a1e" stroke-width="1.1"/><path d="M5.5 1 V6" stroke="#5a4a1e" stroke-width="1.6"/></svg><svg style="left:1897px;top:78px" width="10" height="10" viewBox="0 0 10 10"><path d="M0.5 0.5 L9.5 9.5 M9.5 0.5 L0.5 9.5" stroke="#5a4a1e" stroke-width="1.5"/></svg><div class="a" style="left:1502px;top:94px;width:411px;height:29px;background:#ccd5f0"></div><svg style="left:1511px;top:102px" width="13" height="13" viewBox="0 0 13 13"><circle cx="6.3" cy="6.3" r="6.2" fill="#b9bfd2"/><path d="M10 6.3 H4 M6.3 3.5 L3.4 6.3 L6.3 9.1" fill="none" stroke="#dfe5f8" stroke-width="1.8"/></svg><svg style="left:1533px;top:102px" width="13" height="13" viewBox="0 0 13 13"><circle cx="6.3" cy="6.3" r="6.2" fill="#b9bfd2"/><path d="M3 6.3 H9 M6.7 3.5 L9.6 6.3 L6.7 9.1" fill="none" stroke="#dfe5f8" stroke-width="1.8"/></svg><svg style="left:1554px;top:101px" width="15" height="14" viewBox="0 0 15 14"><path d="M0.8 7.2 L7.5 1 L14.2 7.2 M2.8 6 V13.3 H6 V9 H9 V13.3 H12.2 V6" fill="none" stroke="#1e1e1e" stroke-width="1.4"/></svg><svg style="left:1575px;top:101px" width="16" height="14" viewBox="0 0 16 14"><path d="M6.5 0.6 H14.5 V11 H9" fill="#eef1fb" stroke="#333" stroke-width="1.1"/><path d="M8.5 3 H12.5 M8.5 5.5 H12.5 M9.5 8 H12.5" stroke="#333" stroke-width="1"/><path d="M6 6.5 L8.3 7.5 V12.5 L6 13.5 L2.6 10.8 L1.2 11.8 L0.4 11.4 V8.6 L1.2 8.2 L2.6 9.2 Z" fill="#7b3fc4"/></svg><div class="sep" style="left:1597px;top:98px;height:21px"></div><svg style="left:1608px;top:100px" width="15" height="15" viewBox="0 0 15 15"><circle cx="8.5" cy="9" r="5" fill="none" stroke="#1e1e1e" stroke-width="1.2"/><path d="M8.5 6 V9.3 H11" fill="none" stroke="#1e1e1e" stroke-width="1.1"/><path d="M0.3 1 H4.2 M2.2 1 V4.5" stroke="#1e1e1e" stroke-width="1.1"/></svg><div class="dd" style="left:1628.5px;top:108px;border-top-color:#1e1e1e"></div><svg style="left:1641px;top:101px" width="15" height="14" viewBox="0 0 15 14"><path d="M1.5 6 C2 2.5 6 1 9.5 3 M13.5 8 C13 11.5 9 13 5.5 11" fill="none" stroke="#00539c" stroke-width="2"/><path d="M8 0.2 L13 1.5 L9.8 5.6 Z M7 13.8 L2 12.5 L5.2 8.4 Z" fill="#00539c"/></svg><svg style="left:1665px;top:102px" width="13" height="12" viewBox="0 0 13 12"><path d="M3.5 2.5 V0.6 H12 V7 H10" fill="none" stroke="#1e1e1e" stroke-width="1.1"/><rect x="0.6" y="4" width="8.5" height="7" fill="none" stroke="#1e1e1e" stroke-width="1.1"/><path d="M2.5 7.5 H7.2" stroke="#1e1e1e" stroke-width="1.2"/></svg><svg style="left:1685px;top:100px" width="15" height="15" viewBox="0 0 15 15"><path d="M3 3 V0.6 H9 L11.5 3 V4.5" fill="none" stroke="#1e1e1e" stroke-width="1.1"/><path d="M0.6 3.5 H3 M0.6 3.5 V10 H2" fill="none" stroke="#1e1e1e" stroke-width="1.1"/><path d="M4.5 4.5 H10.5 L13.5 7.5 V14.4 H4.5 Z" fill="none" stroke="#1e1e1e" stroke-width="1.1"/><path d="M6.5 8.5 H11.5 M6.5 10.5 H11.5 M6.5 12.5 H11.5" stroke="#1e1e1e" stroke-width="0.9"/></svg><div class="sep" style="left:1706px;top:98px;height:21px"></div><div class="a" style="left:1712px;top:97.5px;width:22px;height:22px;background:#fdebc4;border:1px solid #9b7b23"></div><svg style="left:1716px;top:102px" width="14" height="13" viewBox="0 0 14 13"><rect x="0" y="0" width="4" height="4" fill="#1e1e1e"/><rect x="5" y="4.5" width="4" height="4" fill="#1e1e1e"/><rect x="10" y="9" width="4" height="4" fill="#1e1e1e"/><path d="M2 4 V6.5 H5 M7 8.5 V11 H10" fill="none" stroke="#1e1e1e" stroke-width="1"/></svg><div class="dd" style="left:1737px;top:108px;border-top-color:#1e1e1e"></div><div class="sep" style="left:1749px;top:98px;height:21px"></div><svg style="left:1757px;top:100px" width="16" height="16" viewBox="0 0 16 16"><path d="M10.8 0.8 C8 0.3 6 2.8 7 5.5 L0.8 11.8 C0 12.8 0.2 14 1 14.8 C1.8 15.6 3 15.6 3.8 14.8 L10 8.5 C12.8 9.5 15.5 7.5 14.8 4.5 L12.3 7 L9.8 6.2 L9 3.5 Z" fill="#1e1e1e"/></svg><div class="a" style="left:1776.5px;top:97.5px;width:22px;height:22px;background:#fdebc4;border:1px solid #9b7b23"></div><div class="a" style="left:1781px;top:108px;width:6px;height:1.5px;background:#1e1e1e"></div><div class="a" style="left:1787px;top:106px;width:7px;height:4px;background:#1e1e1e"></div><div class="a" style="left:1502px;top:123px;width:411px;height:19px;background:#fbfcff;border-top:1px solid #dfe4f4;border-bottom:1px solid #dfe4f4"></div><div class="t" style="left:1507px;top:124px;color:#6b7185">搜索解决方案资源管理器(Ctrl+;)</div><svg style="left:1885px;top:126px" width="13" height="13" viewBox="0 0 13 13"><circle cx="8.3" cy="4.7" r="3.4" fill="none" stroke="#555" stroke-width="1.7"/><path d="M5.8 7.2 L1 12" stroke="#555" stroke-width="2.2" stroke-linecap="round"/></svg><div class="dd" style="left:1903.5px;top:132px;border-top-color:#555"></div><div class="a" style="left:1502px;top:142px;width:411px;height:449px;background:#f7f9fe"></div><div class="a" style="left:1502px;top:142px;width:411px;height:2.5px;background:#ccd5f0"></div><div class="a" style="left:1896px;top:144.5px;width:17px;height:446.5px;background:#e8e8ec"></div><div class="a" style="left:1900px;top:150px;width:0;height:0;border-left:4.5px solid transparent;border-right:4.5px solid transparent;border-bottom:5px solid #8f939e"></div><div class="a" style="left:1900px;top:194px;width:9px;height:38px;background:#c2c3c9"></div><svg style="left:1513px;top:150px" width="6" height="10" viewBox="0 0 6 10"><path d="M0.6 0.8 L5.2 5 L0.6 9.2 Z" fill="none" stroke="#1e1e1e" stroke-width="1.1"/></svg><svg style="left:1535px;top:149px" width="14" height="12" viewBox="0 0 14 12"><path d="M0 0.5 H5 L6 2 H13.5 V11.5 H0 Z" fill="#dcb67a"/><path d="M0 3 H13.5" stroke="#e9cf9f" stroke-width="0.8"/></svg><div class="t" style="left:1555px;top:146.5px;letter-spacing:-0.182px;"><span class="l">02 DataAccess</span>数据库核心层</div><svg style="left:1513px;top:168px" width="6" height="10" viewBox="0 0 6 10"><path d="M0.6 0.8 L5.2 5 L0.6 9.2 Z" fill="none" stroke="#1e1e1e" stroke-width="1.1"/></svg><svg style="left:1535px;top:167px" width="14" height="12" viewBox="0 0 14 12"><path d="M0 0.5 H5 L6 2 H13.5 V11.5 H0 Z" fill="#dcb67a"/><path d="M0 3 H13.5" stroke="#e9cf9f" stroke-width="0.8"/></svg><div class="t" style="left:1555px;top:164.5px;letter-spacing:-0.098px;"><span class="l">03 Business</span> 业务逻辑层</div><svg style="left:1513px;top:186px" width="6" height="10" viewBox="0 0 6 10"><path d="M0.6 0.8 L5.2 5 L0.6 9.2 Z" fill="none" stroke="#1e1e1e" stroke-width="1.1"/></svg><svg style="left:1535px;top:185px" width="14" height="12" viewBox="0 0 14 12"><path d="M0 0.5 H5 L6 2 H13.5 V11.5 H0 Z" fill="#dcb67a"/><path d="M0 3 H13.5" stroke="#e9cf9f" stroke-width="0.8"/></svg><div class="t" style="left:1555px;top:182.5px;letter-spacing:-0.134px;"><span class="l">04 Entity</span>实体层</div><div class="t" style="left:1555px;top:200.5px;letter-spacing:0.051px;"><span class="l">05 Web</span>前端</div><svg style="left:1512px;top:206px" width="6" height="6" viewBox="0 0 6 6"><path d="M6 0 V6 H0 Z" fill="#1e1e1e"/></svg><svg style="left:1535px;top:203px" width="14" height="12" viewBox="0 0 14 12"><path d="M0.5 1 H4.5 L5.5 2.5 H11 V4.5 H3 L0.5 10.5 Z" fill="#fff8e6" stroke="#dcb67a"/><path d="M3 4.5 H13.5 L11 11.3 H0.5 Z" fill="#fff8e6" stroke="#dcb67a"/></svg><div class="a" style="left:1502px;top:217px;width:394px;height:18px;background:#c4d5ff"></div><svg style="left:1531px;top:224px" width="6" height="6" viewBox="0 0 6 6"><path d="M6 0 V6 H0 Z" fill="#1e1e1e"/></svg><svg style="left:1553px;top:220px" width="15" height="14" viewBox="0 0 15 14"><path d="M3 3 V0.6 H14.4 V12 H11" fill="none" stroke="#333" stroke-width="1.2"/><path d="M3 2.5 H14" stroke="#333" stroke-width="1.6"/><circle cx="5.3" cy="8.8" r="4.6" fill="#e9f3fb" stroke="#1a8ad4" stroke-width="1.1"/><path d="M0.8 8.8 H9.8 M5.3 4.2 V13.4 M1.6 6.6 H9 M1.6 11 H9" fill="none" stroke="#1a8ad4" stroke-width="0.8"/></svg><div class="t" style="left:1573.5px;top:218.5px;font-weight:bold;"><span class="l">YiSha.Admin.Web</span></div><svg style="left:1571px;top:238px" width="14" height="14" viewBox="0 0 14 14"><path d="M3.5 9.5 C0.5 9.5 0.3 5.5 3.3 5.2 C3.8 2 8.5 1.5 9.5 4.5 C12.5 4.3 13 8.5 11 9.3" fill="none" stroke="#555" stroke-width="1.1"/><circle cx="7.5" cy="8.5" r="2.2" fill="none" stroke="#2f9a3a" stroke-width="1.3"/><path d="M7.5 10.7 V13.5" stroke="#2f9a3a" stroke-width="1.3"/></svg><svg style="left:1549px;top:258px" width="6" height="10" viewBox="0 0 6 10"><path d="M0.6 0.8 L5.2 5 L0.6 9.2 Z" fill="none" stroke="#1e1e1e" stroke-width="1.1"/></svg><svg style="left:1571px;top:257px" width="14" height="12" viewBox="0 0 14 12"><path d="M0 0.5 H5 L6 2 H13.5 V11.5 H0 Z" fill="#dcb67a"/><path d="M0 3 H13.5" stroke="#e9cf9f" stroke-width="0.8"/></svg><svg style="left:1571px;top:262px" width="7" height="9" viewBox="0 0 7 9"><path d="M3.5 4.5 V9 M1.5 0 V2.5 M5.5 0 V2.5" stroke="#1e1e1e" stroke-width="1.2"/><path d="M0.5 2.5 H6.5 V4 C6.5 6 0.5 6 0.5 4 Z" fill="#1e1e1e"/></svg><svg style="left:1549px;top:276px" width="6" height="10" viewBox="0 0 6 10"><path d="M0.6 0.8 L5.2 5 L0.6 9.2 Z" fill="none" stroke="#1e1e1e" stroke-width="1.1"/></svg><svg style="left:1571px;top:274px" width="14" height="14" viewBox="0 0 14 14"><circle cx="7" cy="7" r="6.2" fill="none" stroke="#333" stroke-width="1.1"/><path d="M0.8 7 H13.2 M7 0.8 V13.2 M2 3.7 H12 M2 10.3 H12 M7 0.8 C4 3.5 4 10.5 7 13.2" fill="none" stroke="#333" stroke-width="0.9"/></svg><svg style="left:1549px;top:294px" width="6" height="10" viewBox="0 0 6 10"><path d="M0.6 0.8 L5.2 5 L0.6 9.2 Z" fill="none" stroke="#1e1e1e" stroke-width="1.1"/></svg><svg style="left:1571px;top:293px" width="14" height="12" viewBox="0 0 14 12"><rect x="0" y="4" width="3" height="3" fill="#333"/><rect x="4.5" y="0.5" width="3" height="3" fill="#333"/><rect x="4.5" y="7.5" width="3" height="3" fill="#333"/><rect x="9" y="4" width="3" height="3" fill="#333"/><rect x="9" y="0" width="3" height="2" fill="#333"/></svg><svg style="left:1549px;top:312px" width="6" height="10" viewBox="0 0 6 10"><path d="M0.6 0.8 L5.2 5 L0.6 9.2 Z" fill="none" stroke="#1e1e1e" stroke-width="1.1"/></svg><svg style="left:1571px;top:311px" width="14" height="12" viewBox="0 0 14 12"><path d="M0 0.5 H5 L6 2 H13.5 V11.5 H0 Z" fill="#dcb67a"/><path d="M0 3 H13.5" stroke="#e9cf9f" stroke-width="0.8"/></svg><svg style="left:1549px;top:330px" width="6" height="10" viewBox="0 0 6 10"><path d="M0.6 0.8 L5.2 5 L0.6 9.2 Z" fill="none" stroke="#1e1e1e" stroke-width="1.1"/></svg><svg style="left:1571px;top:329px" width="14" height="12" viewBox="0 0 14 12"><path d="M0 0.5 H5 L6 2 H13.5 V11.5 H0 Z" fill="#dcb67a"/><path d="M0 3 H13.5" stroke="#e9cf9f" stroke-width="0.8"/></svg><svg style="left:1549px;top:348px" width="6" height="10" viewBox="0 0 6 10"><path d="M0.6 0.8 L5.2 5 L0.6 9.2 Z" fill="none" stroke="#1e1e1e" stroke-width="1.1"/></svg><svg style="left:1571px;top:347px" width="14" height="12" viewBox="0 0 14 12"><path d="M0 0.5 H5 L6 2 H13.5 V11.5 H0 Z" fill="#dcb67a"/><path d="M0 3 H13.5" stroke="#e9cf9f" stroke-width="0.8"/></svg><svg style="left:1549px;top:366px" width="6" height="10" viewBox="0 0 6 10"><path d="M0.6 0.8 L5.2 5 L0.6 9.2 Z" fill="none" stroke="#1e1e1e" stroke-width="1.1"/></svg><svg style="left:1571px;top:365px" width="14" height="12" viewBox="0 0 14 12"><path d="M0 0.5 H5 L6 2 H13.5 V11.5 H0 Z" fill="#dcb67a"/><path d="M0 3 H13.5" stroke="#e9cf9f" stroke-width="0.8"/></svg><svg style="left:1549px;top:384px" width="6" height="10" viewBox="0 0 6 10"><path d="M0.6 0.8 L5.2 5 L0.6 9.2 Z" fill="none" stroke="#1e1e1e" stroke-width="1.1"/></svg><svg style="left:1571px;top:383px" width="14" height="12" viewBox="0 0 14 12"><path d="M0 0.5 H5 L6 2 H13.5 V11.5 H0 Z" fill="#dcb67a"/><path d="M0 3 H13.5" stroke="#e9cf9f" stroke-width="0.8"/></svg><svg style="left:1549px;top:402px" width="6" height="10" viewBox="0 0 6 10"><path d="M0.6 0.8 L5.2 5 L0.6 9.2 Z" fill="none" stroke="#1e1e1e" stroke-width="1.1"/></svg><svg style="left:1571px;top:400px" width="14" height="14" viewBox="0 0 14 14"><path d="M5 1 H12.5 V9" fill="none" stroke="#333" stroke-width="1.2"/><path d="M5 1 V10" stroke="#333" stroke-width="1.2"/><circle cx="3" cy="11" r="2.3" fill="none" stroke="#333" stroke-width="1.2"/><circle cx="10.5" cy="10" r="2.3" fill="none" stroke="#333" stroke-width="1.2"/></svg><svg style="left:1549px;top:420px" width="6" height="10" viewBox="0 0 6 10"><path d="M0.6 0.8 L5.2 5 L0.6 9.2 Z" fill="none" stroke="#1e1e1e" stroke-width="1.1"/></svg><svg style="left:1571px;top:418px" width="14" height="14" viewBox="0 0 14 14"><path d="M5 1 H12.5 V9" fill="none" stroke="#333" stroke-width="1.2"/><path d="M5 1 V10" stroke="#333" stroke-width="1.2"/><circle cx="3" cy="11" r="2.3" fill="none" stroke="#333" stroke-width="1.2"/><circle cx="10.5" cy="10" r="2.3" fill="none" stroke="#333" stroke-width="1.2"/></svg><svg style="left:1571px;top:437px" width="15" height="12" viewBox="0 0 15 12"><rect x="0.6" y="0.6" width="13.8" height="10.8" fill="#fff" stroke="#333" stroke-width="1.1"/><path d="M3 3.5 L5.5 6 L3 8.5 M6.5 8.5 H10" fill="none" stroke="#333" stroke-width="1"/></svg><svg style="left:1571px;top:453px" width="14" height="15" viewBox="0 0 14 15"><path d="M5 3 V0.6 H10.5 L13.4 3.5 V13.4 H6" fill="none" stroke="#333" stroke-width="1.1"/><path d="M2.5 4 C0.5 4.5 0.3 7.5 2.3 8.3 V13.5 H4.2 V8.3 C6.2 7.5 6 4.5 4 4 V6.5 H2.5 Z" fill="#333"/></svg><svg style="left:1549px;top:474px" width="6" height="10" viewBox="0 0 6 10"><path d="M0.6 0.8 L5.2 5 L0.6 9.2 Z" fill="none" stroke="#1e1e1e" stroke-width="1.1"/></svg><div class="t" style="left:1572px;top:471px;font-size:10px;font-weight:bold;color:#388a34;letter-spacing:-0.5px">C#</div><svg style="left:1549px;top:492px" width="6" height="10" viewBox="0 0 6 10"><path d="M0.6 0.8 L5.2 5 L0.6 9.2 Z" fill="none" stroke="#1e1e1e" stroke-width="1.1"/></svg><div class="t" style="left:1572px;top:489px;font-size:10px;font-weight:bold;color:#388a34;letter-spacing:-0.5px">C#</div><svg style="left:1531px;top:510px" width="6" height="10" viewBox="0 0 6 10"><path d="M0.6 0.8 L5.2 5 L0.6 9.2 Z" fill="none" stroke="#1e1e1e" stroke-width="1.1"/></svg><svg style="left:1553px;top:508px" width="15" height="14" viewBox="0 0 15 14"><path d="M3 3 V0.6 H14.4 V12 H11" fill="none" stroke="#333" stroke-width="1.2"/><path d="M3 2.5 H14" stroke="#333" stroke-width="1.6"/><circle cx="5.3" cy="8.8" r="4.6" fill="#e9f3fb" stroke="#1a8ad4" stroke-width="1.1"/><path d="M0.8 8.8 H9.8 M5.3 4.2 V13.4 M1.6 6.6 H9 M1.6 11 H9" fill="none" stroke="#1a8ad4" stroke-width="0.8"/></svg><div class="t" style="left:1573.5px;top:506.5px;"><span class="l">YiSha.</span></div><svg style="left:1531px;top:528px" width="6" height="10" viewBox="0 0 6 10"><path d="M0.6 0.8 L5.2 5 L0.6 9.2 Z" fill="none" stroke="#1e1e1e" stroke-width="1.1"/></svg><svg style="left:1553px;top:527px" width="15" height="12" viewBox="0 0 15 12"><rect x="0.6" y="0.6" width="13.8" height="10.8" fill="#fff" stroke="#388a34" stroke-width="1.1"/><text x="2" y="9" font-family="Liberation Sans,sans-serif" font-size="8" font-weight="bold" fill="#333">C#</text></svg><div class="t" style="left:1573.5px;top:524.5px;"><span class="l">YiSha.</span></div><svg style="left:1535px;top:545px" width="14" height="12" viewBox="0 0 14 12"><path d="M0 0.5 H5 L6 2 H13.5 V11.5 H0 Z" fill="#dcb67a"/><path d="M0 3 H13.5" stroke="#e9cf9f" stroke-width="0.8"/></svg><div class="t" style="left:1555px;top:542.5px;"><span class="l">07</span> 插件</div><svg style="left:1513px;top:564px" width="6" height="10" viewBox="0 0 6 10"><path d="M0.6 0.8 L5.2 5 L0.6 9.2 Z" fill="none" stroke="#1e1e1e" stroke-width="1.1"/></svg><svg style="left:1535px;top:563px" width="14" height="12" viewBox="0 0 14 12"><path d="M0 0.5 H5 L6 2 H13.5 V11.5 H0 Z" fill="#dcb67a"/><path d="M0 3 H13.5" stroke="#e9cf9f" stroke-width="0.8"/></svg><div class="t" style="left:1555px;top:560.5px;"><span class="l">10</span> 测试</div><div class="a" style="left:1502px;top:591px;width:411px;height:21.5px;background:#f7f9fe"></div><div class="t" style="left:1507px;top:594px">解决方案资源管理器</div>
<div class="a" style="left:1502px;top:621px;width:411px;height:21px;background:#40568d"></div><div class="t" style="left:1506px;top:624px;color:#fff">属性</div><div class="a" style="left:1502px;top:642px;width:411px;height:368px;background:#f7f9fe"></div><div class="a" style="left:1502px;top:642px;width:411px;height:23px;background:#fbfcff"></div><div class="t" style="left:1508px;top:645px;font-weight:bold;font-size:13px;letter-spacing:-0.28px">YiSha.Admin.Web</div><div class="a" style="left:1502px;top:666px;width:411px;height:26px;background:#ccd5f0"></div><div class="a" style="left:1505px;top:668px;width:23px;height:22px;background:#fdebc4;border:1px solid #9b7b23"></div><svg style="left:1509px;top:672px" width="15" height="14" viewBox="0 0 15 14"><rect x="0" y="0" width="5.5" height="5.5" fill="#2b2b2b"/><rect x="0" y="8" width="5.5" height="5.5" fill="#2b2b2b"/><path d="M1.2 2.75 H4.3 M2.75 1.2 V4.3 M1.2 10.75 H4.3 M2.75 9.2 V12.3" stroke="#fdebc4" stroke-width="1"/><path d="M7 1 H12.5 M7 3.5 H14.5 M7 6 H14.5 M7 8.5 H14.5 M7 11 H12.5 M13.5 11 H14.5 M7 13 H12.5" stroke="#2b2b2b" stroke-width="1.1"/></svg><div class="t" style="left:1532px;top:669px;font-size:8px;font-weight:bold;line-height:8px;height:8px">A</div><div class="t" style="left:1533px;top:678px;font-size:8px;font-weight:bold;line-height:8px;height:8px">Z</div><svg style="left:1541px;top:673px" width="7" height="12" viewBox="0 0 7 12"><path d="M3.5 0 V10 M0.5 7 L3.5 10.5 L6.5 7" fill="none" stroke="#00539c" stroke-width="1.6"/></svg><div class="sep" style="left:1554.5px;top:669px;height:20px"></div><svg style="left:1560px;top:671px" width="16" height="16" viewBox="0 0 16 16"><path d="M10.8 0.8 C8 0.3 6 2.8 7 5.5 L0.8 11.8 C0 12.8 0.2 14 1 14.8 C1.8 15.6 3 15.6 3.8 14.8 L10 8.5 C12.8 9.5 15.5 7.5 14.8 4.5 L12.3 7 L9.8 6.2 L9 3.5 Z" fill="#a9b0c6"/></svg><div class="a" style="left:1502px;top:693px;width:411px;height:115px;background:#eeeef2"></div><svg style="left:1505.5px;top:698.5px" width="9" height="9" viewBox="0 0 9 9"><rect x="0.5" y="0.5" width="8" height="8" fill="#fff" stroke="#1e1e1e"/><path d="M2 4.5 H7" stroke="#1e1e1e"/></svg><div class="t" style="left:1521px;top:695px;font-weight:bold;font-size:13px">Misc</div><div class="a" style="left:1517px;top:713px;width:396px;height:18px;background:#f2f2f5;border-top:1px solid #f9f9fc"></div><div class="t" style="left:1521px;top:714px;color:#6d6d6d">完整路径</div><div class="a" style="left:1517px;top:732px;width:396px;height:18px;background:#f2f2f5;border-top:1px solid #f9f9fc"></div><div class="t" style="left:1521px;top:733px;color:#6d6d6d">文件名</div><div class="a" style="left:1517px;top:751px;width:396px;height:18px;background:#f2f2f5;border-top:1px solid #f9f9fc"></div><div class="t" style="left:1521px;top:752px;color:#6d6d6d">项目文件夹</div><svg style="left:1505.5px;top:774.5px" width="9" height="9" viewBox="0 0 9 9"><rect x="0.5" y="0.5" width="8" height="8" fill="#fff" stroke="#1e1e1e"/><path d="M2 4.5 H7" stroke="#1e1e1e"/></svg><div class="t" style="left:1521px;top:771px;font-weight:bold">常规</div><div class="t" style="left:1521px;top:790px;font-size:12.5px">UserSecretsId</div><div class="a" style="left:1502px;top:947px;width:411px;height:1px;background:#e6e8f0"></div><div class="t" style="left:1508px;top:954px;font-weight:bold;font-size:12.5px;letter-spacing:-0.2px">UserSecretsId</div>
<div class="a" style="left:1475px;top:787px;width:19px;height:2px;background:#0000c8"></div>
<div class="a" style="left:1891px;top:1031px;width:10px;height:8px;border-radius:0 0 5px 5px;background:#d0101c;z-index:0"></div><div class="a" style="left:1583px;top:226.5px;width:331.5px;height:808px;background:#e9eeff;border:1px solid #a9b4d4;box-shadow:2px 2px 4px 1px rgba(20,25,60,.55)"></div><div class="a" style="left:1586px;top:273px;width:326px;height:22px;background:#b0c4fd"></div><div class="m" style="top:232px">生成(U)</div>
<div class="m" style="top:254px">重新生成(E)</div>
<div class="m" style="top:276px">清理(N)</div>
<div class="m" style="top:298px">查看(W)</div><div class="marr" style="top:302px"></div>
<div class="m" style="top:320px">分析和代码清理(Z)</div><div class="marr" style="top:324px"></div>
<div class="m" style="top:342px">打包(P)</div>
<div class="m" style="top:364px">发布(B)...</div>
<div class="m" style="top:386px">配置 <span class="l">Application Insights(C)...</span></div>
<div class="msep" style="top:407.0px"></div><div class="m" style="top:413px">运行测试(T)</div>
<div class="m" style="top:435px">调试测试(D)</div>
<div class="msep" style="top:456.0px"></div><div class="m" style="top:462px">概述(V)</div>
<div class="msep" style="top:483.0px"></div><div class="m" style="top:489px">限定为此范围(S)</div>
<div class="m" style="top:511px">新建解决方案资源管理器视图(N)</div>
<div class="m" style="top:533px">文件嵌套</div><div class="marr" style="top:537px"></div>
<div class="msep" style="top:554.0px"></div><div class="m" style="top:560px">编辑项目文件</div>
<div class="msep" style="top:581.0px"></div><div class="m" style="top:587px">生成依赖项(B)</div><div class="marr" style="top:591px"></div>
<div class="msep" style="top:608.0px"></div><div class="m" style="top:614px">添加(D)</div><div class="marr" style="top:618px"></div>
<div class="m" style="top:636px">管理 <span class="l">NuGet</span> 程序包(N)...</div>
<div class="m" style="top:658px">管理客户端库(M)...</div>
<div class="m" style="top:680px">管理用户机密(G)</div>
<div class="m" style="top:702px">删除未使用的引用...</div>
<div class="msep" style="top:723.0px"></div><div class="m" style="top:729px">设为启动项目(A)</div>
<div class="m" style="top:751px">调试(G)</div><div class="marr" style="top:755px"></div>
<div class="msep" style="top:772.0px"></div><div class="m" style="top:778px">剪切(T)</div><div class="sc" style="top:778px"><span class="l">Ctrl+X</span></div>
<div class="m" style="top:800px;color:#9a9fb3">粘贴(P)</div><div class="sc" style="top:800px;color:#9a9fb3"><span class="l">Ctrl+V</span></div>
<div class="m" style="top:822px">移除(V)</div><div class="sc" style="top:822px"><span class="l">Del</span></div>
<div class="m" style="top:844px">重命名(M)</div><div class="sc" style="top:844px"><span class="l">F2</span></div>
<div class="msep" style="top:865.0px"></div><div class="m" style="top:871px">卸载项目(L)</div>
<div class="m" style="top:893px">加载项目的直接依赖项</div>
<div class="m" style="top:915px">加载项目的整个依赖树</div>
<div class="msep" style="top:936.0px"></div><div class="m" style="top:942px">复制完整路径(U)</div>
<div class="m" style="top:964px">在文件资源管理器中打开文件夹(X)</div>
<div class="m" style="top:986px">在终端中打开</div>
<div class="msep" style="top:1007.0px"></div><div class="m" style="top:1013px">属性(R)</div><div class="sc" style="top:1013px"><span class="l">Alt+Enter</span></div>
<svg style="left:1591px;top:232.0px" width="14" height="15" viewBox="0 0 14 15"><path d="M7 0 V5 M3.8 2.2 L7 5.4 L10.2 2.2" fill="none" stroke="#2b2b2b" stroke-width="1.7"/><path d="M0 15 V6.5 H1.3 V8.2 H12.7 V6.5 H14 V15 Z" fill="#2b2b2b"/><path d="M2.6 9.6 H4.2 M6.2 9.6 H7.8 M9.8 9.6 H11.4 M4.4 13 H6 M8 13 H9.6" stroke="#e9eeff" stroke-width="1.5"/></svg>
<svg style="left:1591px;top:365.0px" width="15" height="14" viewBox="0 0 15 14"><circle cx="6" cy="7.2" r="5.4" fill="none" stroke="#1a9ad6" stroke-width="1.3"/><path d="M0.6 7.2 H11.4 M6 1.8 V12.6 M6 1.8 C3.2 4 3.2 10.4 6 12.6" fill="none" stroke="#1a9ad6" stroke-width="1.1"/><path d="M9 8 H14 V14 H9 Z" fill="#e9eeff"/><path d="M11.8 12.5 V6 M9.5 8.3 L11.8 5.8 L14.1 8.3" fill="none" stroke="#1a9ad6" stroke-width="1.5"/></svg>
<svg style="left:1591px;top:386.5px" width="15" height="15" viewBox="0 0 15 15"><path d="M2.5 0.5 V5.5 M0 3 H5" stroke="#2f9a3a" stroke-width="1.5"/><path d="M9.8 1 C12.6 1 14.4 3 14.4 5.3 C14.4 7.5 12.6 8.3 12.2 10.5 H7.4 C7 8.3 5.2 7.5 5.2 5.3 C5.2 3 7 1 9.8 1 Z" fill="#68217a"/><path d="M7.8 12 H11.8 M8.3 13.8 H11.3" stroke="#68217a" stroke-width="1.2"/><path d="M8.3 4.3 C9 3 11 3.2 11 4.8 C11 6 9.7 6 9.7 7.6" fill="none" stroke="#e9eeff" stroke-width="1"/></svg>
<svg style="left:1591px;top:415.0px" width="13" height="11" viewBox="0 0 13 11"><path d="M0 0 L3.2 2.3 L0 4.6 Z" fill="#2f9a3a"/><path d="M5.3 1.2 H10.7 M6.6 1.2 V4.2 L3.4 10.2 H12.6 L9.4 4.2 V1.2" fill="none" stroke="#1e1e1e" stroke-width="1.2"/><path d="M5 7.6 H11 L12.5 10.5 H3.5 Z" fill="#1e1e1e"/></svg>
<svg style="left:1591px;top:511.5px" width="15" height="15" viewBox="0 0 15 15"><path d="M4.5 3 V0.6 H14.4 V9.5 H11.5" fill="none" stroke="#1e1e1e" stroke-width="1.1"/><path d="M4.5 2 H14.4" stroke="#1e1e1e" stroke-width="1.6"/><rect x="0.6" y="4.6" width="10.8" height="9.8" fill="#e9eeff" stroke="#1e1e1e" stroke-width="1.1"/><path d="M0.6 6 H11.4" stroke="#1e1e1e" stroke-width="1.8"/><path d="M2.5 8.8 H4 M5.2 8.8 H9.5 M2.5 10.8 H4 M5.2 10.8 H9.5 M2.5 12.6 H4 M5.2 12.6 H9.5" stroke="#1e1e1e" stroke-width="0.9"/></svg>
<svg style="left:1591px;top:561.5px" width="15" height="13" viewBox="0 0 15 13"><path d="M2 12 C-0.5 8 2.5 4 9.5 4.2" fill="none" stroke="#00539c" stroke-width="2.2"/><path d="M8.5 0.3 L14 4.3 L8.5 8.3" fill="none" stroke="#00539c" stroke-width="2.2"/></svg>
<svg style="left:1591px;top:636.5px" width="15" height="15" viewBox="0 0 15 15"><path d="M1.5 0.3 V2.7 M0.3 1.5 H2.7" stroke="#00539c" stroke-width="1"/><rect x="3.5" y="3.5" width="11" height="11" rx="2.5" fill="#00539c"/><circle cx="7" cy="7" r="1.4" fill="#e9eeff"/><circle cx="10.8" cy="10.8" r="2.3" fill="#e9eeff"/></svg>
<svg style="left:1591px;top:658.5px" width="15" height="15" viewBox="0 0 15 15"><circle cx="9" cy="6" r="5.2" fill="none" stroke="#555" stroke-width="1.1"/><path d="M3.8 6 H14.2 M9 0.8 V11.2 M4.8 3.3 H13.2" fill="none" stroke="#555" stroke-width="0.9"/><path d="M2 8.5 H5.5 V13" fill="none" stroke="#d8531e" stroke-width="1.3"/><circle cx="2" cy="13" r="1.6" fill="none" stroke="#d8531e" stroke-width="1.1"/></svg>
<svg style="left:1591px;top:729.5px" width="15" height="15" viewBox="0 0 15 15"><circle cx="7.5" cy="7.5" r="3.6" fill="none" stroke="#1e1e1e" stroke-width="2.6"/><path d="M7.5 0.3 V3 M7.5 12 V14.7 M0.3 7.5 H3 M12 7.5 H14.7 M2.4 2.4 L4.3 4.3 M10.7 10.7 L12.6 12.6 M12.6 2.4 L10.7 4.3 M4.3 10.7 L2.4 12.6" stroke="#1e1e1e" stroke-width="2.2"/></svg>
<svg style="left:1591px;top:778.5px" width="14" height="15" viewBox="0 0 14 15"><path d="M3.5 0.5 L9.5 10 M10.5 0.5 L4.5 10" stroke="#1e1e1e" stroke-width="1.3"/><circle cx="3.3" cy="12" r="2.2" fill="none" stroke="#1e1e1e" stroke-width="1.3"/><circle cx="10.7" cy="12" r="2.2" fill="none" stroke="#1e1e1e" stroke-width="1.3"/></svg>
<svg style="left:1591px;top:800.5px" width="14" height="15" viewBox="0 0 14 15"><path d="M5.5 7 V3.5 H12.5 V14 H8" fill="none" stroke="#b5bbd0" stroke-width="1.1"/><path d="M7 3.5 V1 H11 V3.5" fill="none" stroke="#b5bbd0" stroke-width="1.1"/><rect x="1" y="7.5" width="6.5" height="6.5" fill="none" stroke="#b5bbd0" stroke-width="1.1"/></svg>
<svg style="left:1591px;top:823.5px" width="13" height="13" viewBox="0 0 13 13"><path d="M1 1 L12 12 M12 1 L1 12" stroke="#c4281c" stroke-width="2"/></svg>
<svg style="left:1591px;top:847.5px" width="14" height="9" viewBox="0 0 14 9"><rect x="0.6" y="0.6" width="12.8" height="7.8" fill="none" stroke="#1e1e1e" stroke-width="1"/><path d="M3.5 2.3 V6.7 M2.5 2.3 H4.5 M2.5 6.7 H4.5" stroke="#1e1e1e" stroke-width="0.8"/></svg>
<svg style="left:1591px;top:942.5px" width="14" height="15" viewBox="0 0 14 15"><path d="M5 4 V0.6 H13.4 V9.5 H9.5" fill="none" stroke="#1e1e1e" stroke-width="1.1"/><rect x="0.6" y="5" width="8.5" height="9.4" fill="none" stroke="#1e1e1e" stroke-width="1.1"/></svg>
<svg style="left:1591px;top:965.5px" width="15" height="13" viewBox="0 0 15 13"><path d="M2 12 C-0.5 8 2.5 4 9.5 4.2" fill="none" stroke="#00539c" stroke-width="2.2"/><path d="M8.5 0.3 L14 4.3 L8.5 8.3" fill="none" stroke="#00539c" stroke-width="2.2"/></svg>
<svg style="left:1591px;top:988.0px" width="15" height="12" viewBox="0 0 15 12"><rect x="0.6" y="0.6" width="13.8" height="10.8" fill="none" stroke="#1e1e1e" stroke-width="1.1"/><path d="M0.6 2 H14.4" stroke="#1e1e1e" stroke-width="1.2"/><path d="M2.8 4.5 L5 6.5 L2.8 8.5 M6 8.7 H9.5" fill="none" stroke="#1e1e1e" stroke-width="1"/></svg>
<svg style="left:1591px;top:1013.0px" width="16" height="16" viewBox="0 0 16 16"><path d="M10.8 0.8 C8 0.3 6 2.8 7 5.5 L0.8 11.8 C0 12.8 0.2 14 1 14.8 C1.8 15.6 3 15.6 3.8 14.8 L10 8.5 C12.8 9.5 15.5 7.5 14.8 4.5 L12.3 7 L9.8 6.2 L9 3.5 Z" fill="#333"/></svg>
<div class="tip" style="left:695px;top:53px;width:242px;height:33px"></div><div class="a" style="left:690px;top:65px;width:0;height:0;border-top:5px solid transparent;border-bottom:5px solid transparent;border-right:5px solid rgba(30,30,32,.72)"></div><div class="t" style="left:700.5px;top:60.5px;color:#fff;font-size:16px;line-height:20px;height:20px">选择启动当前项目，不要使用iis</div><div class="badge" style="left:666px;top:60px">2</div><div class="tip" style="left:1620px;top:697px;width:130px;height:34px"></div><div class="a" style="left:1615px;top:709px;width:0;height:0;border-top:5px solid transparent;border-bottom:5px solid transparent;border-right:5px solid rgba(30,30,32,.72)"></div><div class="t" style="left:1625.5px;top:704.5px;color:#fff;font-size:16px;line-height:20px;height:20px">设置为启动项目</div><div class="badge" style="left:1591px;top:704px">1</div><div class="a" style="left:1915px;top:941px;width:6px;height:23px;background:linear-gradient(90deg,#fff,#d8d8d8);border:1px solid #aaa;border-right:0"></div></div>
</body></html>
